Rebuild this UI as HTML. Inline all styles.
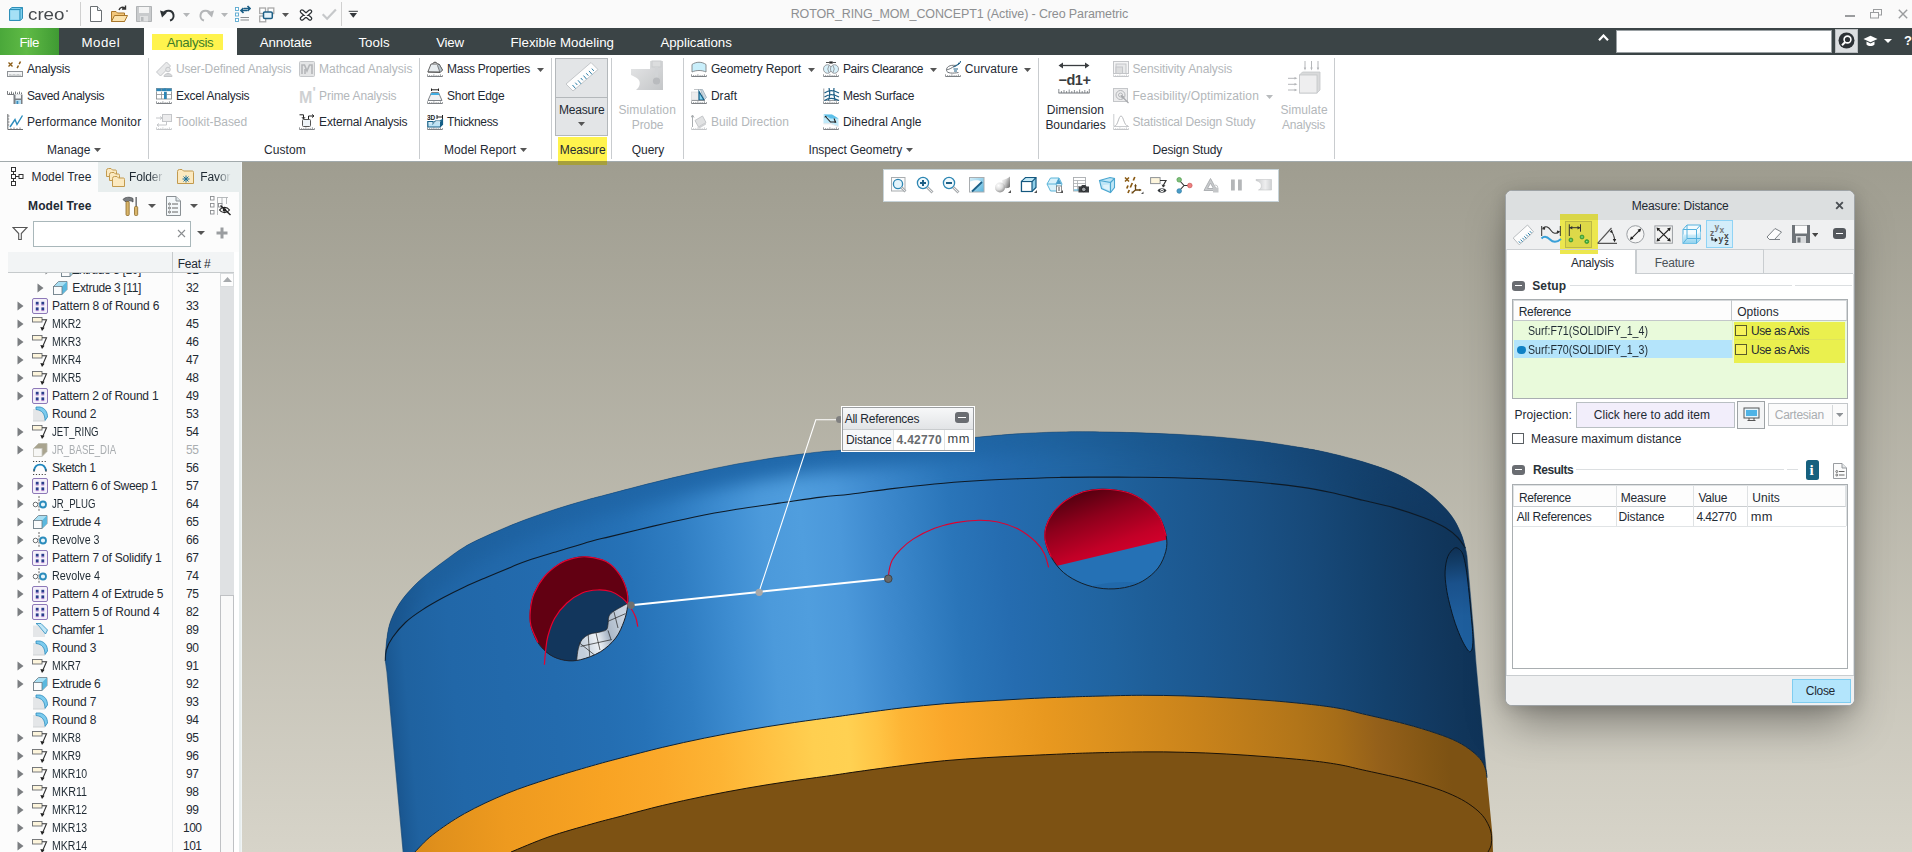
<!DOCTYPE html>
<html lang="en"><head><meta charset="utf-8"><title>ROTOR_RING_MOM_CONCEPT1 (Active) - Creo Parametric</title>
<style>
html,body{margin:0;padding:0;}
body{width:1912px;height:852px;overflow:hidden;background:#a29f94;font-family:"Liberation Sans",sans-serif;}
#app{position:relative;width:1912px;height:852px;overflow:hidden;}
#app div,#app svg,#app span{position:absolute;box-sizing:border-box;}
#app span.t{white-space:pre;}
</style></head><body><div id="app">
<svg style="left:0;top:0" width="1912" height="852" viewBox="0 0 1912 852"><defs><linearGradient id="bg" x1="0" y1="162" x2="0" y2="852" gradientUnits="userSpaceOnUse"><stop offset="0" stop-color="#9f9d90"/><stop offset="1" stop-color="#d7d4c9"/></linearGradient><linearGradient id="gb" x1="385" y1="640" x2="1493" y2="539.2" gradientUnits="userSpaceOnUse"><stop offset="0.0000" stop-color="#1a5791"/><stop offset="0.0063" stop-color="#1c5c98"/><stop offset="0.0152" stop-color="#1f62a0"/><stop offset="0.0582" stop-color="#2167a8"/><stop offset="0.1477" stop-color="#236bae"/><stop offset="0.1924" stop-color="#246eb2"/><stop offset="0.2247" stop-color="#2672b7"/><stop offset="0.2694" stop-color="#2f7dc2"/><stop offset="0.3142" stop-color="#3f8ed2"/><stop offset="0.3482" stop-color="#4c9adb"/><stop offset="0.3822" stop-color="#509ede"/><stop offset="0.4153" stop-color="#4b98da"/><stop offset="0.4493" stop-color="#3f8bcf"/><stop offset="0.4834" stop-color="#3480c4"/><stop offset="0.5165" stop-color="#2a75b9"/><stop offset="0.5612" stop-color="#256cb0"/><stop offset="0.6042" stop-color="#2268a8"/><stop offset="0.6516" stop-color="#20639f"/><stop offset="0.6848" stop-color="#1e5e98"/><stop offset="0.7295" stop-color="#1c5890"/><stop offset="0.7832" stop-color="#1a5185"/><stop offset="0.8369" stop-color="#174979"/><stop offset="0.8906" stop-color="#13406b"/><stop offset="0.9264" stop-color="#123a62"/><stop offset="0.9578" stop-color="#10355a"/><stop offset="0.9918" stop-color="#0f3257"/></linearGradient><linearGradient id="gband" x1="385" y1="500" x2="1493" y2="399.2" gradientUnits="userSpaceOnUse"><stop offset="0.0000" stop-color="#19558e"/><stop offset="0.0313" stop-color="#1d5f9c"/><stop offset="0.1924" stop-color="#1f65a6"/><stop offset="0.3357" stop-color="#2068aa"/><stop offset="0.4252" stop-color="#2169ab"/><stop offset="0.5147" stop-color="#2067a8"/><stop offset="0.6042" stop-color="#1e619d"/><stop offset="0.7116" stop-color="#1a568c"/><stop offset="0.8190" stop-color="#164878"/><stop offset="0.9085" stop-color="#123c66"/><stop offset="0.9918" stop-color="#10335a"/></linearGradient><linearGradient id="go" x1="385" y1="760" x2="1493" y2="659.2" gradientUnits="userSpaceOnUse"><stop offset="0.0170" stop-color="#d98a1a"/><stop offset="0.0403" stop-color="#e0901c"/><stop offset="0.1029" stop-color="#ee9a1f"/><stop offset="0.1924" stop-color="#f8a323"/><stop offset="0.2462" stop-color="#fba92a"/><stop offset="0.2999" stop-color="#fdb434"/><stop offset="0.3446" stop-color="#ffc243"/><stop offset="0.3849" stop-color="#ffcf50"/><stop offset="0.4162" stop-color="#ffd152"/><stop offset="0.4431" stop-color="#ffc444"/><stop offset="0.4655" stop-color="#fdb535"/><stop offset="0.5057" stop-color="#faa72a"/><stop offset="0.5505" stop-color="#f0a025"/><stop offset="0.5953" stop-color="#e8981f"/><stop offset="0.6400" stop-color="#de921e"/><stop offset="0.7295" stop-color="#c9831b"/><stop offset="0.8190" stop-color="#b27519"/><stop offset="0.8548" stop-color="#a66d18"/><stop offset="0.8906" stop-color="#94601a"/><stop offset="0.9354" stop-color="#835614"/><stop offset="0.9533" stop-color="#7d5213"/></linearGradient><linearGradient id="gr2" x1="1092" y1="489" x2="1118" y2="562" gradientUnits="userSpaceOnUse"><stop offset="0" stop-color="#560010"/><stop offset=".35" stop-color="#8e001c"/><stop offset=".75" stop-color="#c20027"/><stop offset="1" stop-color="#d6002c"/></linearGradient><linearGradient id="gm" x1="580" y1="640" x2="625" y2="625" gradientUnits="userSpaceOnUse"><stop offset="0" stop-color="#c3cedb"/><stop offset=".35" stop-color="#eef2f6"/><stop offset=".6" stop-color="#a9b6c6"/><stop offset="1" stop-color="#c9d3df"/></linearGradient><linearGradient id="gh3" x1="1452" y1="550" x2="1462" y2="645" gradientUnits="userSpaceOnUse"><stop offset="0" stop-color="#0f3257"/><stop offset=".12" stop-color="#123c66"/><stop offset=".35" stop-color="#1a518b"/><stop offset=".7" stop-color="#1e5d9b"/><stop offset="1" stop-color="#1e5f9e"/></linearGradient>
<clipPath id="ch1"><path d="M586.7 556.9 C592.3 557.5 600.9 558.7 606.5 561.8 C612.1 564.9 616.8 570.4 620.2 575.5 C623.6 580.6 625.9 587.2 627.1 592.3 C628.3 597.4 628.1 601.2 627.6 606.0 C627.1 610.8 626.0 616.0 624.0 621.3 C622.0 626.6 619.6 632.9 615.7 638.0 C611.8 643.1 606.2 648.2 600.4 651.8 C594.5 655.4 586.5 658.3 580.6 659.7 C574.8 661.1 570.4 661.2 565.3 660.4 C560.2 659.6 554.6 657.8 550.0 654.8 C545.4 651.8 541.1 647.4 537.9 642.6 C534.7 637.8 532.3 631.1 531.0 625.8 C529.7 620.5 529.8 615.9 530.3 610.6 C530.8 605.3 531.7 599.4 534.0 593.8 C536.3 588.2 539.8 582.0 544.0 577.0 C548.2 572.0 554.4 567.1 559.2 564.0 C564.0 560.9 568.4 559.6 573.0 558.4 C577.6 557.2 581.1 556.3 586.7 556.9 Z"/></clipPath>
<clipPath id="ch2"><path d="M1103.2 489.2 C1110.6 489.3 1120.5 490.3 1127.6 492.5 C1134.7 494.7 1140.6 498.3 1145.9 502.5 C1151.2 506.7 1156.3 512.1 1159.7 517.7 C1163.1 523.3 1165.2 530.4 1166.2 536.0 C1167.2 541.6 1167.2 546.0 1165.8 551.3 C1164.4 556.6 1161.9 563.0 1158.1 568.0 C1154.3 573.0 1148.5 577.7 1142.9 581.0 C1137.3 584.3 1131.2 586.3 1124.6 587.6 C1118.0 588.9 1110.3 589.3 1103.2 588.6 C1096.1 587.9 1088.5 586.0 1081.9 583.3 C1075.3 580.6 1068.7 576.9 1063.6 572.6 C1058.5 568.3 1054.5 562.7 1051.4 557.4 C1048.4 552.1 1046.2 545.7 1045.3 540.6 C1044.4 535.5 1044.7 531.5 1046.0 526.9 C1047.3 522.3 1049.7 517.4 1052.9 513.1 C1056.1 508.8 1059.9 504.6 1065.0 501.0 C1070.1 497.4 1077.0 493.8 1083.4 491.8 C1089.8 489.8 1095.8 489.1 1103.2 489.2 Z"/></clipPath>
<filter id="fb" x="-5%" y="-20%" width="110%" height="140%"><feGaussianBlur stdDeviation="9"/></filter>
<mask id="mband" maskUnits="userSpaceOnUse" x="380" y="400" width="1120" height="300"><path d="M385.3 660.0 C385.5 657.3 385.6 649.6 386.3 643.7 C387.0 637.8 387.7 630.6 389.5 624.6 C391.3 618.6 393.9 613.0 396.9 607.7 C399.9 602.4 403.3 597.9 407.5 593.0 C411.7 588.1 416.3 583.4 422.3 578.2 C428.3 573.0 436.4 566.9 443.4 561.7 C450.4 556.5 457.5 551.1 464.5 546.9 C471.5 542.7 476.8 540.3 485.6 536.3 C494.4 532.3 506.7 526.9 517.3 522.8 C527.9 518.6 537.9 515.1 549.0 511.4 C560.1 507.7 573.7 503.6 583.9 500.7 C594.1 497.8 598.6 496.8 610.0 493.8 C621.4 490.8 638.2 486.3 652.3 482.8 C666.4 479.3 680.4 475.9 694.5 472.8 C708.6 469.7 722.7 466.6 736.8 464.0 C750.9 461.4 764.9 459.2 779.0 457.1 C793.1 455.1 811.0 452.8 821.3 451.7 C831.5 450.6 831.5 451.1 840.5 450.3 C849.5 449.5 863.1 448.0 875.0 446.8 C886.9 445.6 900.3 444.3 912.0 443.2 C923.7 442.1 934.5 441.0 945.0 440.0 C955.5 439.0 962.7 438.4 975.0 437.4 C987.3 436.3 1004.6 434.6 1019.0 433.7 C1033.4 432.8 1049.5 432.2 1061.3 431.9 C1073.1 431.6 1078.2 431.6 1090.0 431.7 C1101.8 431.8 1118.2 432.2 1132.3 432.6 C1146.4 433.0 1160.4 433.5 1174.5 434.2 C1188.6 434.9 1202.7 435.7 1216.8 436.9 C1230.9 438.1 1244.9 439.4 1259.0 441.2 C1273.1 443.0 1289.3 445.6 1301.3 447.6 C1313.3 449.6 1320.7 451.0 1331.0 453.4 C1341.3 455.8 1352.6 458.6 1363.0 461.8 C1373.4 465.0 1384.4 468.5 1393.6 472.5 C1402.8 476.5 1410.9 481.1 1418.0 485.6 C1425.1 490.1 1430.8 494.3 1436.4 499.4 C1442.0 504.5 1447.5 510.4 1451.6 516.0 C1455.7 521.6 1458.5 527.7 1460.8 533.0 C1463.1 538.3 1464.4 544.2 1465.4 548.0 C1466.4 551.8 1466.7 554.5 1467.0 555.8" fill="none" stroke="#fff" stroke-width="40" filter="url(#fb)"/></mask>
<clipPath id="cvp"><rect x="242" y="162" width="1670" height="690"/></clipPath>
</defs>
<g clip-path="url(#cvp)">
<rect x="242" y="162" width="1670" height="690" fill="url(#bg)"/>
<path d="M511.0 852.0 C517.3 849.5 535.6 841.4 549.0 836.8 C562.4 832.1 579.5 827.5 591.3 824.1 C603.1 820.7 608.2 819.6 620.0 816.5 C631.8 813.4 648.2 808.9 662.3 805.5 C676.4 802.1 690.4 799.1 704.5 796.2 C718.6 793.3 732.7 790.7 746.8 788.2 C760.9 785.7 774.9 783.5 789.0 781.4 C803.1 779.3 819.5 777.2 831.3 775.5 C843.1 773.8 848.2 772.9 860.0 771.3 C871.8 769.6 888.2 767.4 902.3 765.6 C916.4 763.8 930.4 762.0 944.5 760.7 C958.6 759.4 972.7 758.5 986.8 757.6 C1000.9 756.7 1014.9 756.2 1029.0 755.5 C1043.1 754.8 1059.5 754.1 1071.3 753.6 C1083.1 753.1 1088.2 753.0 1100.0 752.7 C1111.8 752.4 1128.2 752.0 1142.3 751.9 C1156.4 751.8 1170.4 751.9 1184.5 752.3 C1198.6 752.6 1212.7 753.2 1226.8 754.0 C1240.9 754.8 1254.9 755.8 1269.0 756.9 C1283.1 758.0 1299.5 759.4 1311.3 760.7 C1323.1 762.0 1331.5 763.3 1340.0 764.8 C1348.5 766.3 1351.5 767.4 1362.3 769.8 C1373.0 772.2 1392.2 776.2 1404.5 779.3 C1416.8 782.4 1427.4 785.6 1436.2 788.6 C1445.0 791.6 1451.3 794.4 1457.3 797.3 C1463.3 800.2 1467.9 803.1 1472.1 806.2 C1476.3 809.3 1479.9 812.4 1482.7 815.7 C1485.5 819.0 1487.5 822.9 1489.0 826.2 C1490.5 829.5 1491.2 832.5 1491.6 835.7 C1491.9 838.9 1491.7 842.5 1491.1 845.2 C1490.5 847.9 1488.5 850.9 1488.0 852.0 Z" fill="#7d5213"/>
<path d="M414.9 852.0 C417.9 849.1 424.5 841.1 432.8 834.7 C441.1 828.3 452.2 820.5 464.5 813.6 C476.8 806.7 492.7 799.3 506.8 793.5 C520.9 787.7 534.9 783.3 549.0 778.7 C563.1 774.1 579.5 769.4 591.3 766.0 C603.1 762.6 608.2 761.3 620.0 758.2 C631.8 755.1 648.2 750.8 662.3 747.4 C676.4 744.0 690.4 741.0 704.5 738.1 C718.6 735.2 732.7 732.6 746.8 730.1 C760.9 727.6 774.9 725.4 789.0 723.3 C803.1 721.2 819.5 719.0 831.3 717.4 C843.1 715.8 848.2 715.0 860.0 713.4 C871.8 711.8 888.2 709.5 902.3 707.9 C916.4 706.3 930.4 704.9 944.5 703.7 C958.6 702.6 972.7 701.9 986.8 701.0 C1000.9 700.1 1014.9 699.3 1029.0 698.6 C1043.1 697.9 1059.5 697.3 1071.3 696.9 C1083.1 696.5 1088.2 696.4 1100.0 696.1 C1111.8 695.8 1128.2 695.3 1142.3 695.3 C1156.4 695.3 1170.4 695.5 1184.5 695.9 C1198.6 696.3 1212.7 697.0 1226.8 697.8 C1240.9 698.6 1254.9 699.4 1269.0 700.5 C1283.1 701.6 1299.5 703.2 1311.3 704.5 C1323.1 705.8 1331.5 707.0 1340.0 708.5 C1348.5 710.0 1351.5 711.2 1362.3 713.8 C1373.0 716.3 1392.2 720.5 1404.5 723.8 C1416.8 727.0 1427.4 730.3 1436.2 733.3 C1445.0 736.3 1451.3 738.7 1457.3 741.7 C1463.3 744.7 1468.0 748.0 1472.1 751.2 C1476.1 754.4 1479.3 757.5 1481.6 760.7 C1483.9 763.9 1485.0 767.4 1485.9 770.2 C1486.8 773.0 1486.7 776.4 1486.9 777.6 L1492.2 832.6 L1493 852 L511 852 Z" fill="url(#go)"/>
<path d="M511.0 852.0 C517.3 849.5 535.6 841.4 549.0 836.8 C562.4 832.1 579.5 827.5 591.3 824.1 C603.1 820.7 608.2 819.6 620.0 816.5 C631.8 813.4 648.2 808.9 662.3 805.5 C676.4 802.1 690.4 799.1 704.5 796.2 C718.6 793.3 732.7 790.7 746.8 788.2 C760.9 785.7 774.9 783.5 789.0 781.4 C803.1 779.3 819.5 777.2 831.3 775.5 C843.1 773.8 848.2 772.9 860.0 771.3 C871.8 769.6 888.2 767.4 902.3 765.6 C916.4 763.8 930.4 762.0 944.5 760.7 C958.6 759.4 972.7 758.5 986.8 757.6 C1000.9 756.7 1014.9 756.2 1029.0 755.5 C1043.1 754.8 1059.5 754.1 1071.3 753.6 C1083.1 753.1 1088.2 753.0 1100.0 752.7 C1111.8 752.4 1128.2 752.0 1142.3 751.9 C1156.4 751.8 1170.4 751.9 1184.5 752.3 C1198.6 752.6 1212.7 753.2 1226.8 754.0 C1240.9 754.8 1254.9 755.8 1269.0 756.9 C1283.1 758.0 1299.5 759.4 1311.3 760.7 C1323.1 762.0 1331.5 763.3 1340.0 764.8 C1348.5 766.3 1351.5 767.4 1362.3 769.8 C1373.0 772.2 1392.2 776.2 1404.5 779.3 C1416.8 782.4 1427.4 785.6 1436.2 788.6 C1445.0 791.6 1451.3 794.4 1457.3 797.3 C1463.3 800.2 1467.9 803.1 1472.1 806.2 C1476.3 809.3 1479.9 812.4 1482.7 815.7 C1485.5 819.0 1487.5 822.9 1489.0 826.2 C1490.5 829.5 1491.2 832.5 1491.6 835.7 C1491.9 838.9 1491.7 842.5 1491.1 845.2 C1490.5 847.9 1488.5 850.9 1488.0 852.0 Z" fill="#7d5213"/>
<path d="M511.0 852.0 C517.3 849.5 535.6 841.4 549.0 836.8 C562.4 832.1 579.5 827.5 591.3 824.1 C603.1 820.7 608.2 819.6 620.0 816.5 C631.8 813.4 648.2 808.9 662.3 805.5 C676.4 802.1 690.4 799.1 704.5 796.2 C718.6 793.3 732.7 790.7 746.8 788.2 C760.9 785.7 774.9 783.5 789.0 781.4 C803.1 779.3 819.5 777.2 831.3 775.5 C843.1 773.8 848.2 772.9 860.0 771.3 C871.8 769.6 888.2 767.4 902.3 765.6 C916.4 763.8 930.4 762.0 944.5 760.7 C958.6 759.4 972.7 758.5 986.8 757.6 C1000.9 756.7 1014.9 756.2 1029.0 755.5 C1043.1 754.8 1059.5 754.1 1071.3 753.6 C1083.1 753.1 1088.2 753.0 1100.0 752.7 C1111.8 752.4 1128.2 752.0 1142.3 751.9 C1156.4 751.8 1170.4 751.9 1184.5 752.3 C1198.6 752.6 1212.7 753.2 1226.8 754.0 C1240.9 754.8 1254.9 755.8 1269.0 756.9 C1283.1 758.0 1299.5 759.4 1311.3 760.7 C1323.1 762.0 1331.5 763.3 1340.0 764.8 C1348.5 766.3 1351.5 767.4 1362.3 769.8 C1373.0 772.2 1392.2 776.2 1404.5 779.3 C1416.8 782.4 1427.4 785.6 1436.2 788.6 C1445.0 791.6 1451.3 794.4 1457.3 797.3 C1463.3 800.2 1467.9 803.1 1472.1 806.2 C1476.3 809.3 1479.9 812.4 1482.7 815.7 C1485.5 819.0 1487.5 822.9 1489.0 826.2 C1490.5 829.5 1491.2 832.5 1491.6 835.7 C1491.9 838.9 1491.7 842.5 1491.1 845.2 C1490.5 847.9 1488.5 850.9 1488.0 852.0" fill="none" stroke="#1a1208" stroke-width="1"/>
<path d="M385.3 660.0 C385.5 657.3 385.6 649.6 386.3 643.7 C387.0 637.8 387.7 630.6 389.5 624.6 C391.3 618.6 393.9 613.0 396.9 607.7 C399.9 602.4 403.3 597.9 407.5 593.0 C411.7 588.1 416.3 583.4 422.3 578.2 C428.3 573.0 436.4 566.9 443.4 561.7 C450.4 556.5 457.5 551.1 464.5 546.9 C471.5 542.7 476.8 540.3 485.6 536.3 C494.4 532.3 506.7 526.9 517.3 522.8 C527.9 518.6 537.9 515.1 549.0 511.4 C560.1 507.7 573.7 503.6 583.9 500.7 C594.1 497.8 598.6 496.8 610.0 493.8 C621.4 490.8 638.2 486.3 652.3 482.8 C666.4 479.3 680.4 475.9 694.5 472.8 C708.6 469.7 722.7 466.6 736.8 464.0 C750.9 461.4 764.9 459.2 779.0 457.1 C793.1 455.1 811.0 452.8 821.3 451.7 C831.5 450.6 831.5 451.1 840.5 450.3 C849.5 449.5 863.1 448.0 875.0 446.8 C886.9 445.6 900.3 444.3 912.0 443.2 C923.7 442.1 934.5 441.0 945.0 440.0 C955.5 439.0 962.7 438.4 975.0 437.4 C987.3 436.3 1004.6 434.6 1019.0 433.7 C1033.4 432.8 1049.5 432.2 1061.3 431.9 C1073.1 431.6 1078.2 431.6 1090.0 431.7 C1101.8 431.8 1118.2 432.2 1132.3 432.6 C1146.4 433.0 1160.4 433.5 1174.5 434.2 C1188.6 434.9 1202.7 435.7 1216.8 436.9 C1230.9 438.1 1244.9 439.4 1259.0 441.2 C1273.1 443.0 1289.3 445.6 1301.3 447.6 C1313.3 449.6 1320.7 451.0 1331.0 453.4 C1341.3 455.8 1352.6 458.6 1363.0 461.8 C1373.4 465.0 1384.4 468.5 1393.6 472.5 C1402.8 476.5 1410.9 481.1 1418.0 485.6 C1425.1 490.1 1430.8 494.3 1436.4 499.4 C1442.0 504.5 1447.5 510.4 1451.6 516.0 C1455.7 521.6 1458.5 527.7 1460.8 533.0 C1463.1 538.3 1464.4 544.2 1465.4 548.0 C1466.4 551.8 1466.7 554.5 1467.0 555.8C1468.0 567.2 1471.4 604.6 1473.0 624.0 C1474.6 643.4 1475.3 655.3 1476.8 672.0 C1478.3 688.7 1480.1 706.4 1481.8 724.0 C1483.5 741.6 1486.1 768.7 1486.9 777.6C1486.7 776.4 1486.8 773.0 1485.9 770.2 C1485.0 767.4 1483.9 763.9 1481.6 760.7 C1479.3 757.5 1476.1 754.4 1472.1 751.2 C1468.0 748.0 1463.3 744.7 1457.3 741.7 C1451.3 738.7 1445.0 736.3 1436.2 733.3 C1427.4 730.3 1416.8 727.0 1404.5 723.8 C1392.2 720.5 1373.0 716.3 1362.3 713.8 C1351.5 711.2 1348.5 710.0 1340.0 708.5 C1331.5 707.0 1323.1 705.8 1311.3 704.5 C1299.5 703.2 1283.1 701.6 1269.0 700.5 C1254.9 699.4 1240.9 698.6 1226.8 697.8 C1212.7 697.0 1198.6 696.3 1184.5 695.9 C1170.4 695.5 1156.4 695.3 1142.3 695.3 C1128.2 695.3 1111.8 695.8 1100.0 696.1 C1088.2 696.4 1083.1 696.5 1071.3 696.9 C1059.5 697.3 1043.1 697.9 1029.0 698.6 C1014.9 699.3 1000.9 700.1 986.8 701.0 C972.7 701.9 958.6 702.6 944.5 703.7 C930.4 704.9 916.4 706.3 902.3 707.9 C888.2 709.5 871.8 711.8 860.0 713.4 C848.2 715.0 843.1 715.8 831.3 717.4 C819.5 719.0 803.1 721.2 789.0 723.3 C774.9 725.4 760.9 727.6 746.8 730.1 C732.7 732.6 718.6 735.2 704.5 738.1 C690.4 741.0 676.4 744.0 662.3 747.4 C648.2 750.8 631.8 755.1 620.0 758.2 C608.2 761.3 603.1 762.6 591.3 766.0 C579.5 769.4 563.1 774.1 549.0 778.7 C534.9 783.3 520.9 787.7 506.8 793.5 C492.7 799.3 476.8 806.7 464.5 813.6 C452.2 820.5 441.1 828.3 432.8 834.7 C424.5 841.1 417.9 849.1 414.9 852.0 L403.2 852 L387 672 Z" fill="url(#gb)"/>
<path d="M385.3 660.0 C385.5 657.3 385.6 649.6 386.3 643.7 C387.0 637.8 387.7 630.6 389.5 624.6 C391.3 618.6 393.9 613.0 396.9 607.7 C399.9 602.4 403.3 597.9 407.5 593.0 C411.7 588.1 416.3 583.4 422.3 578.2 C428.3 573.0 436.4 566.9 443.4 561.7 C450.4 556.5 457.5 551.1 464.5 546.9 C471.5 542.7 476.8 540.3 485.6 536.3 C494.4 532.3 506.7 526.9 517.3 522.8 C527.9 518.6 537.9 515.1 549.0 511.4 C560.1 507.7 573.7 503.6 583.9 500.7 C594.1 497.8 598.6 496.8 610.0 493.8 C621.4 490.8 638.2 486.3 652.3 482.8 C666.4 479.3 680.4 475.9 694.5 472.8 C708.6 469.7 722.7 466.6 736.8 464.0 C750.9 461.4 764.9 459.2 779.0 457.1 C793.1 455.1 811.0 452.8 821.3 451.7 C831.5 450.6 831.5 451.1 840.5 450.3 C849.5 449.5 863.1 448.0 875.0 446.8 C886.9 445.6 900.3 444.3 912.0 443.2 C923.7 442.1 934.5 441.0 945.0 440.0 C955.5 439.0 962.7 438.4 975.0 437.4 C987.3 436.3 1004.6 434.6 1019.0 433.7 C1033.4 432.8 1049.5 432.2 1061.3 431.9 C1073.1 431.6 1078.2 431.6 1090.0 431.7 C1101.8 431.8 1118.2 432.2 1132.3 432.6 C1146.4 433.0 1160.4 433.5 1174.5 434.2 C1188.6 434.9 1202.7 435.7 1216.8 436.9 C1230.9 438.1 1244.9 439.4 1259.0 441.2 C1273.1 443.0 1289.3 445.6 1301.3 447.6 C1313.3 449.6 1320.7 451.0 1331.0 453.4 C1341.3 455.8 1352.6 458.6 1363.0 461.8 C1373.4 465.0 1384.4 468.5 1393.6 472.5 C1402.8 476.5 1410.9 481.1 1418.0 485.6 C1425.1 490.1 1430.8 494.3 1436.4 499.4 C1442.0 504.5 1447.5 510.4 1451.6 516.0 C1455.7 521.6 1458.5 527.7 1460.8 533.0 C1463.1 538.3 1464.4 544.2 1465.4 548.0 C1466.4 551.8 1466.7 554.5 1467.0 555.8 L1465.4 548.2C1464.1 546.4 1461.0 540.9 1457.7 537.5 C1454.4 534.1 1451.1 531.0 1445.5 527.7 C1439.9 524.4 1432.7 521.1 1424.0 517.7 C1415.3 514.4 1403.8 510.5 1393.6 507.6 C1383.4 504.7 1373.4 502.8 1363.0 500.3 C1352.6 497.8 1341.3 494.7 1331.0 492.5 C1320.7 490.3 1313.3 488.8 1301.3 487.1 C1289.3 485.4 1273.1 483.6 1259.0 482.3 C1244.9 481.0 1230.9 480.1 1216.8 479.3 C1202.7 478.5 1188.6 478.1 1174.5 477.7 C1160.4 477.3 1146.4 477.3 1132.3 477.2 C1118.2 477.1 1101.8 477.1 1090.0 477.1 C1078.2 477.1 1073.1 477.1 1061.3 477.4 C1049.5 477.7 1033.1 478.1 1019.0 478.7 C1004.9 479.3 990.9 479.9 976.8 480.8 C962.7 481.7 948.6 482.7 934.5 484.0 C920.4 485.3 906.4 486.9 892.3 488.6 C878.2 490.3 861.8 492.8 850.0 494.2 C838.2 495.6 833.1 495.6 821.3 497.1 C809.5 498.6 793.1 501.1 779.0 503.1 C764.9 505.1 750.9 507.0 736.8 509.3 C722.7 511.6 708.6 514.1 694.5 517.0 C680.4 519.9 666.4 523.1 652.3 526.4 C638.2 529.7 620.2 534.1 610.0 536.6 C599.8 539.1 599.7 538.9 591.3 541.2 C582.9 543.6 570.2 547.5 559.6 550.7 C549.0 553.9 536.0 557.6 527.9 560.4 C519.8 563.1 518.0 564.3 511.0 567.2 C503.9 570.1 493.4 574.4 485.6 577.7 C477.9 581.0 471.5 583.7 464.5 587.0 C457.5 590.3 450.4 593.8 443.4 597.6 C436.4 601.4 428.6 605.8 422.3 609.9 C416.0 614.0 410.3 617.9 405.4 622.5 C400.5 627.1 395.9 632.7 392.7 637.3 C389.5 641.9 387.5 646.0 386.3 650.0 C385.1 654.0 385.5 659.2 385.4 661.0 Z" fill="url(#gband)" mask="url(#mband)"/>
<path d="M385.4 661.0 C385.5 659.2 385.1 654.0 386.3 650.0 C387.5 646.0 389.5 641.9 392.7 637.3 C395.9 632.7 400.5 627.1 405.4 622.5 C410.3 617.9 416.0 614.0 422.3 609.9 C428.6 605.8 436.4 601.4 443.4 597.6 C450.4 593.8 457.5 590.3 464.5 587.0 C471.5 583.7 477.9 581.0 485.6 577.7 C493.4 574.4 503.9 570.1 511.0 567.2 C518.0 564.3 519.8 563.1 527.9 560.4 C536.0 557.6 549.0 553.9 559.6 550.7 C570.2 547.5 582.9 543.6 591.3 541.2 C599.7 538.9 599.8 539.1 610.0 536.6 C620.2 534.1 638.2 529.7 652.3 526.4 C666.4 523.1 680.4 519.9 694.5 517.0 C708.6 514.1 722.7 511.6 736.8 509.3 C750.9 507.0 764.9 505.1 779.0 503.1 C793.1 501.1 809.5 498.6 821.3 497.1 C833.1 495.6 838.2 495.6 850.0 494.2 C861.8 492.8 878.2 490.3 892.3 488.6 C906.4 486.9 920.4 485.3 934.5 484.0 C948.6 482.7 962.7 481.7 976.8 480.8 C990.9 479.9 1004.9 479.3 1019.0 478.7 C1033.1 478.1 1049.5 477.7 1061.3 477.4 C1073.1 477.1 1078.2 477.1 1090.0 477.1 C1101.8 477.1 1118.2 477.1 1132.3 477.2 C1146.4 477.3 1160.4 477.3 1174.5 477.7 C1188.6 478.1 1202.7 478.5 1216.8 479.3 C1230.9 480.1 1244.9 481.0 1259.0 482.3 C1273.1 483.6 1289.3 485.4 1301.3 487.1 C1313.3 488.8 1320.7 490.3 1331.0 492.5 C1341.3 494.7 1352.6 497.8 1363.0 500.3 C1373.4 502.8 1383.4 504.7 1393.6 507.6 C1403.8 510.5 1415.3 514.4 1424.0 517.7 C1432.7 521.1 1439.9 524.4 1445.5 527.7 C1451.1 531.0 1454.4 534.1 1457.7 537.5 C1461.0 540.9 1464.1 546.4 1465.4 548.2" fill="none" stroke="#0e1a26" stroke-width="1.1"/>
<path d="M414.9 852.0 C417.9 849.1 424.5 841.1 432.8 834.7 C441.1 828.3 452.2 820.5 464.5 813.6 C476.8 806.7 492.7 799.3 506.8 793.5 C520.9 787.7 534.9 783.3 549.0 778.7 C563.1 774.1 579.5 769.4 591.3 766.0 C603.1 762.6 608.2 761.3 620.0 758.2 C631.8 755.1 648.2 750.8 662.3 747.4 C676.4 744.0 690.4 741.0 704.5 738.1 C718.6 735.2 732.7 732.6 746.8 730.1 C760.9 727.6 774.9 725.4 789.0 723.3 C803.1 721.2 819.5 719.0 831.3 717.4 C843.1 715.8 848.2 715.0 860.0 713.4 C871.8 711.8 888.2 709.5 902.3 707.9 C916.4 706.3 930.4 704.9 944.5 703.7 C958.6 702.6 972.7 701.9 986.8 701.0 C1000.9 700.1 1014.9 699.3 1029.0 698.6 C1043.1 697.9 1059.5 697.3 1071.3 696.9 C1083.1 696.5 1088.2 696.4 1100.0 696.1 C1111.8 695.8 1128.2 695.3 1142.3 695.3 C1156.4 695.3 1170.4 695.5 1184.5 695.9 C1198.6 696.3 1212.7 697.0 1226.8 697.8 C1240.9 698.6 1254.9 699.4 1269.0 700.5 C1283.1 701.6 1299.5 703.2 1311.3 704.5 C1323.1 705.8 1331.5 707.0 1340.0 708.5 C1348.5 710.0 1351.5 711.2 1362.3 713.8 C1373.0 716.3 1392.2 720.5 1404.5 723.8 C1416.8 727.0 1427.4 730.3 1436.2 733.3 C1445.0 736.3 1451.3 738.7 1457.3 741.7 C1463.3 744.7 1468.0 748.0 1472.1 751.2 C1476.1 754.4 1479.3 757.5 1481.6 760.7 C1483.9 763.9 1485.0 767.4 1485.9 770.2 C1486.8 773.0 1486.7 776.4 1486.9 777.6" fill="none" stroke="#0f2233" stroke-width="1"/>
<path d="M385.3 660.0 C385.5 657.3 385.6 649.6 386.3 643.7 C387.0 637.8 387.7 630.6 389.5 624.6 C391.3 618.6 393.9 613.0 396.9 607.7 C399.9 602.4 403.3 597.9 407.5 593.0 C411.7 588.1 416.3 583.4 422.3 578.2 C428.3 573.0 436.4 566.9 443.4 561.7 C450.4 556.5 457.5 551.1 464.5 546.9 C471.5 542.7 476.8 540.3 485.6 536.3 C494.4 532.3 506.7 526.9 517.3 522.8 C527.9 518.6 537.9 515.1 549.0 511.4 C560.1 507.7 573.7 503.6 583.9 500.7 C594.1 497.8 598.6 496.8 610.0 493.8 C621.4 490.8 638.2 486.3 652.3 482.8 C666.4 479.3 680.4 475.9 694.5 472.8 C708.6 469.7 722.7 466.6 736.8 464.0 C750.9 461.4 764.9 459.2 779.0 457.1 C793.1 455.1 811.0 452.8 821.3 451.7 C831.5 450.6 831.5 451.1 840.5 450.3 C849.5 449.5 863.1 448.0 875.0 446.8 C886.9 445.6 900.3 444.3 912.0 443.2 C923.7 442.1 934.5 441.0 945.0 440.0 C955.5 439.0 962.7 438.4 975.0 437.4 C987.3 436.3 1004.6 434.6 1019.0 433.7 C1033.4 432.8 1049.5 432.2 1061.3 431.9 C1073.1 431.6 1078.2 431.6 1090.0 431.7 C1101.8 431.8 1118.2 432.2 1132.3 432.6 C1146.4 433.0 1160.4 433.5 1174.5 434.2 C1188.6 434.9 1202.7 435.7 1216.8 436.9 C1230.9 438.1 1244.9 439.4 1259.0 441.2 C1273.1 443.0 1289.3 445.6 1301.3 447.6 C1313.3 449.6 1320.7 451.0 1331.0 453.4 C1341.3 455.8 1352.6 458.6 1363.0 461.8 C1373.4 465.0 1384.4 468.5 1393.6 472.5 C1402.8 476.5 1410.9 481.1 1418.0 485.6 C1425.1 490.1 1430.8 494.3 1436.4 499.4 C1442.0 504.5 1447.5 510.4 1451.6 516.0 C1455.7 521.6 1458.5 527.7 1460.8 533.0 C1463.1 538.3 1464.4 544.2 1465.4 548.0 C1466.4 551.8 1466.7 554.5 1467.0 555.8C1468.0 567.2 1471.4 604.6 1473.0 624.0 C1474.6 643.4 1475.3 655.3 1476.8 672.0 C1478.3 688.7 1480.1 706.4 1481.8 724.0 C1483.5 741.6 1486.1 768.7 1486.9 777.6" fill="none" stroke="#123a60" stroke-width="1" opacity=".45"/>
<path d="M385.3 660 L387 672 L403.2 852" fill="none" stroke="#174a7a" stroke-width="1.2" opacity=".7"/>
<!-- hole 1 -->
<path d="M586.7 556.9 C592.3 557.5 600.9 558.7 606.5 561.8 C612.1 564.9 616.8 570.4 620.2 575.5 C623.6 580.6 625.9 587.2 627.1 592.3 C628.3 597.4 628.1 601.2 627.6 606.0 C627.1 610.8 626.0 616.0 624.0 621.3 C622.0 626.6 619.6 632.9 615.7 638.0 C611.8 643.1 606.2 648.2 600.4 651.8 C594.5 655.4 586.5 658.3 580.6 659.7 C574.8 661.1 570.4 661.2 565.3 660.4 C560.2 659.6 554.6 657.8 550.0 654.8 C545.4 651.8 541.1 647.4 537.9 642.6 C534.7 637.8 532.3 631.1 531.0 625.8 C529.7 620.5 529.8 615.9 530.3 610.6 C530.8 605.3 531.7 599.4 534.0 593.8 C536.3 588.2 539.8 582.0 544.0 577.0 C548.2 572.0 554.4 567.1 559.2 564.0 C564.0 560.9 568.4 559.6 573.0 558.4 C577.6 557.2 581.1 556.3 586.7 556.9 Z" fill="#620012"/>
<g clip-path="url(#ch1)"><path d="M544.4 664.7 C544.6 662.6 544.9 656.5 545.5 651.8 C546.1 647.1 546.3 642.1 547.8 636.5 C549.3 630.9 551.5 623.8 554.7 618.2 C557.9 612.6 562.3 607.2 566.9 603.0 C571.5 598.8 577.0 595.2 582.1 593.0 C587.2 590.8 592.6 590.2 597.4 590.0 C602.2 589.8 606.9 590.2 611.0 591.5 C615.1 592.8 618.7 595.2 621.8 597.6 C624.9 600.0 627.1 602.8 629.4 606.0 C631.7 609.2 634.1 613.3 635.5 616.7 C636.9 620.1 637.4 625.0 637.8 626.6 L660 700 L520 700 Z" fill="#12365c"/><path d="M576.8 659.4 C577.0 657.6 577.4 652.0 578.3 648.7 C579.2 645.4 580.2 642.0 582.1 639.6 C584.0 637.2 586.7 635.5 589.7 634.2 C592.8 632.9 597.6 632.7 600.4 631.9 C603.2 631.1 605.2 630.9 606.5 629.6 C607.8 628.3 607.6 626.4 608.0 624.3 C608.4 622.1 608.0 618.7 608.8 616.7 C609.6 614.7 610.7 613.6 612.6 612.1 C614.5 610.6 617.8 608.9 620.2 607.5 C622.6 606.1 626.0 604.3 627.1 603.7 L640 604 L640 670 L576 670 Z" fill="url(#gm)" stroke="#222" stroke-width=".7"/>
<path d="M608 621.3 L625.6 613.6 M580.6 646.4 L611.8 639.6 M588.2 635 L589.7 656.3 M579 642.6 L594.3 654.8 M608 630.4 L611 639.6 M596 633 L600 650 M614 612 L618 628" fill="none" stroke="#222" stroke-width=".7"/></g>
<path d="M586.7 556.9 C592.3 557.5 600.9 558.7 606.5 561.8 C612.1 564.9 616.8 570.4 620.2 575.5 C623.6 580.6 625.9 587.2 627.1 592.3 C628.3 597.4 628.1 601.2 627.6 606.0 C627.1 610.8 626.0 616.0 624.0 621.3 C622.0 626.6 619.6 632.9 615.7 638.0 C611.8 643.1 606.2 648.2 600.4 651.8 C594.5 655.4 586.5 658.3 580.6 659.7 C574.8 661.1 570.4 661.2 565.3 660.4 C560.2 659.6 554.6 657.8 550.0 654.8 C545.4 651.8 541.1 647.4 537.9 642.6 C534.7 637.8 532.3 631.1 531.0 625.8 C529.7 620.5 529.8 615.9 530.3 610.6 C530.8 605.3 531.7 599.4 534.0 593.8 C536.3 588.2 539.8 582.0 544.0 577.0 C548.2 572.0 554.4 567.1 559.2 564.0 C564.0 560.9 568.4 559.6 573.0 558.4 C577.6 557.2 581.1 556.3 586.7 556.9 Z" fill="none" stroke="#1a2430" stroke-width="1"/>
<path d="M537.9 642.6 C536.8 639.8 532.3 631.1 531.0 625.8 C529.7 620.5 529.8 615.9 530.3 610.6 C530.8 605.3 531.7 599.4 534.0 593.8 C536.3 588.2 539.8 582.0 544.0 577.0 C548.2 572.0 554.4 567.1 559.2 564.0 C564.0 560.9 568.4 559.6 573.0 558.4 C577.6 557.2 581.1 556.3 586.7 556.9 C592.3 557.5 600.9 558.7 606.5 561.8 C612.1 564.9 616.8 570.4 620.2 575.5 C623.6 580.6 625.9 587.2 627.1 592.3 C628.3 597.4 627.5 603.7 627.6 606.0" fill="none" stroke="#e8002f" stroke-width="1.2"/>
<path d="M544.4 664.7 C544.6 662.6 544.9 656.5 545.5 651.8 C546.1 647.1 546.3 642.1 547.8 636.5 C549.3 630.9 551.5 623.8 554.7 618.2 C557.9 612.6 562.3 607.2 566.9 603.0 C571.5 598.8 577.0 595.2 582.1 593.0 C587.2 590.8 592.6 590.2 597.4 590.0 C602.2 589.8 606.9 590.2 611.0 591.5 C615.1 592.8 618.7 595.2 621.8 597.6 C624.9 600.0 627.1 602.8 629.4 606.0 C631.7 609.2 634.1 613.3 635.5 616.7 C636.9 620.1 637.4 625.0 637.8 626.6" fill="none" stroke="#e8002f" stroke-width="1.2"/>
<!-- hole 2 -->
<path d="M1103.2 489.2 C1110.6 489.3 1120.5 490.3 1127.6 492.5 C1134.7 494.7 1140.6 498.3 1145.9 502.5 C1151.2 506.7 1156.3 512.1 1159.7 517.7 C1163.1 523.3 1165.2 530.4 1166.2 536.0 C1167.2 541.6 1167.2 546.0 1165.8 551.3 C1164.4 556.6 1161.9 563.0 1158.1 568.0 C1154.3 573.0 1148.5 577.7 1142.9 581.0 C1137.3 584.3 1131.2 586.3 1124.6 587.6 C1118.0 588.9 1110.3 589.3 1103.2 588.6 C1096.1 587.9 1088.5 586.0 1081.9 583.3 C1075.3 580.6 1068.7 576.9 1063.6 572.6 C1058.5 568.3 1054.5 562.7 1051.4 557.4 C1048.4 552.1 1046.2 545.7 1045.3 540.6 C1044.4 535.5 1044.7 531.5 1046.0 526.9 C1047.3 522.3 1049.7 517.4 1052.9 513.1 C1056.1 508.8 1059.9 504.6 1065.0 501.0 C1070.1 497.4 1077.0 493.8 1083.4 491.8 C1089.8 489.8 1095.8 489.1 1103.2 489.2 Z" fill="#2571b5"/>
<g clip-path="url(#ch2)"><path d="M1030 572.4 L1200 531.7 L1200 480 L1030 480 Z" fill="url(#gr2)"/><ellipse cx="1125" cy="592" rx="40" ry="10" fill="#1a5c99" opacity=".35"/></g>
<path d="M1103.2 489.2 C1110.6 489.3 1120.5 490.3 1127.6 492.5 C1134.7 494.7 1140.6 498.3 1145.9 502.5 C1151.2 506.7 1156.3 512.1 1159.7 517.7 C1163.1 523.3 1165.2 530.4 1166.2 536.0 C1167.2 541.6 1167.2 546.0 1165.8 551.3 C1164.4 556.6 1161.9 563.0 1158.1 568.0 C1154.3 573.0 1148.5 577.7 1142.9 581.0 C1137.3 584.3 1131.2 586.3 1124.6 587.6 C1118.0 588.9 1110.3 589.3 1103.2 588.6 C1096.1 587.9 1088.5 586.0 1081.9 583.3 C1075.3 580.6 1068.7 576.9 1063.6 572.6 C1058.5 568.3 1054.5 562.7 1051.4 557.4 C1048.4 552.1 1046.2 545.7 1045.3 540.6 C1044.4 535.5 1044.7 531.5 1046.0 526.9 C1047.3 522.3 1049.7 517.4 1052.9 513.1 C1056.1 508.8 1059.9 504.6 1065.0 501.0 C1070.1 497.4 1077.0 493.8 1083.4 491.8 C1089.8 489.8 1095.8 489.1 1103.2 489.2 Z" fill="none" stroke="#14202c" stroke-width="1"/>
<path d="M1051.4 557.4 C1050.4 554.6 1046.2 545.7 1045.3 540.6 C1044.4 535.5 1044.7 531.5 1046.0 526.9 C1047.3 522.3 1049.7 517.4 1052.9 513.1 C1056.1 508.8 1059.9 504.6 1065.0 501.0 C1070.1 497.4 1077.0 493.8 1083.4 491.8 C1089.8 489.8 1095.8 489.1 1103.2 489.2 C1110.6 489.3 1120.5 490.3 1127.6 492.5 C1134.7 494.7 1140.6 498.3 1145.9 502.5 C1151.2 506.7 1156.3 512.1 1159.7 517.7 C1163.1 523.3 1165.1 533.0 1166.2 536.0" fill="none" stroke="#e8002f" stroke-width="1.1"/>
<path d="M888.5 579.0 C888.6 577.6 888.5 573.8 889.1 570.6 C889.7 567.4 890.4 563.5 892.3 560.0 C894.2 556.5 897.2 552.9 900.7 549.4 C904.2 545.9 907.8 542.4 913.4 538.9 C919.0 535.4 927.5 531.0 934.5 528.3 C941.5 525.6 948.2 523.9 955.6 522.6 C963.0 521.3 971.9 520.4 978.9 520.3 C985.9 520.2 991.2 520.5 997.9 522.0 C1004.6 523.5 1012.7 526.1 1019.0 529.4 C1025.3 532.7 1031.7 538.0 1035.9 542.0 C1040.1 546.0 1042.3 549.5 1044.4 553.7 C1046.5 557.9 1047.9 565.1 1048.6 567.4" fill="none" stroke="#e0002e" stroke-width="1.1"/>
<!-- hole 3 -->
<path d="M1454.5 548.1 C1452.6 549.2 1449.5 552.5 1447.9 556.3 C1446.3 560.1 1445.4 565.9 1445.1 571.1 C1444.8 576.3 1445.5 582.0 1446.3 587.5 C1447.0 593.0 1448.1 597.9 1449.6 603.9 C1451.1 609.9 1453.2 617.6 1455.3 623.6 C1457.3 629.6 1459.9 635.6 1461.9 640.0 C1464.0 644.4 1466.2 648.0 1467.6 649.9 C1469.0 651.8 1469.3 651.9 1470.1 651.6 C1470.9 651.3 1471.7 650.8 1472.2 648.3 C1472.7 645.8 1473.1 642.8 1472.9 636.8 C1472.7 630.8 1471.6 620.3 1470.9 612.1 C1470.2 603.9 1469.3 594.9 1468.5 587.5 C1467.7 580.1 1466.9 573.3 1466.0 567.8 C1465.1 562.3 1464.1 557.7 1463.0 554.6 C1461.9 551.5 1460.8 550.5 1459.4 549.4 C1458.0 548.3 1456.4 547.0 1454.5 548.1 Z" fill="url(#gh3)"/>
<path d="M1454.5 548.1 C1452.6 549.2 1449.5 552.5 1447.9 556.3 C1446.3 560.1 1445.4 565.9 1445.1 571.1 C1444.8 576.3 1445.5 582.0 1446.3 587.5 C1447.0 593.0 1448.1 597.9 1449.6 603.9 C1451.1 609.9 1453.2 617.6 1455.3 623.6 C1457.3 629.6 1459.9 635.6 1461.9 640.0 C1464.0 644.4 1466.2 648.0 1467.6 649.9 C1469.0 651.8 1469.3 651.9 1470.1 651.6 C1470.9 651.3 1471.7 650.8 1472.2 648.3 C1472.7 645.8 1473.1 642.8 1472.9 636.8 C1472.7 630.8 1471.6 620.3 1470.9 612.1 C1470.2 603.9 1469.3 594.9 1468.5 587.5 C1467.7 580.1 1466.9 573.3 1466.0 567.8 C1465.1 562.3 1464.1 557.7 1463.0 554.6 C1461.9 551.5 1460.8 550.5 1459.4 549.4 C1458.0 548.3 1456.4 547.0 1454.5 548.1 Z" fill="none" stroke="#0a1724" stroke-width="1"/>
<!-- measurement -->
<path d="M759 592 L815.8 419.8 L841 419.8" fill="none" stroke="#ffffff" stroke-width="1.1"/>
<path d="M631 605.2 L888 578.5" fill="none" stroke="#ffffff" stroke-width="2"/>
<circle cx="630.9" cy="605.2" r="3.8" fill="#707070"/>
<circle cx="759.2" cy="592.3" r="3.6" fill="#a8a8a8"/>
<circle cx="888.3" cy="578.8" r="3.8" fill="#686868" stroke="#3a3a3a" stroke-width=".8"/>
<circle cx="839.5" cy="419.5" r="3.5" fill="#808080"/>
</g></svg>
<div style="left:841px;top:406px;width:134px;height:46px;background:#fff;border:1px solid #fff;"></div>
<div style="left:842px;top:407px;width:132px;height:44px;background:#fff;border:1px solid #9a9da0;"></div>
<div style="left:843px;top:408px;width:130px;height:21.5px;background:linear-gradient(#f7f8f9,#e2e4e6);border-bottom:1px solid #c9ccce;"></div>
<div style="left:893px;top:430px;width:1px;height:20px;background:#dfe2e4;"></div>
<div style="left:944px;top:430px;width:1px;height:20px;background:#dfe2e4;"></div>
<div style="left:843px;top:430px;width:50px;height:20px;background:#f7f8f9;"></div>
<span class="t" style="left:844.7px;top:410.6px;font-size:12px;line-height:16px;color:#1f2a33;letter-spacing:-0.246px;">All References</span>
<div style="left:955px;top:412px;width:13.5px;height:11px;background:#6a6d72;border-radius:3px;"></div>
<div style="left:958px;top:416.8px;width:7.5px;height:1.5px;background:#fff;"></div>
<span class="t" style="left:846.0px;top:431.7px;font-size:12px;line-height:16px;color:#1f2a33;letter-spacing:-0.148px;">Distance</span>
<span class="t" style="left:896.6px;top:431.7px;font-size:12px;line-height:16px;color:#686b6e;font-weight:700;letter-spacing:0.273px;">4.42770</span>
<span class="t" style="left:947.6px;top:431.4px;font-size:12.8px;line-height:16px;color:#3a4248;letter-spacing:0.486px;">mm</span>
<div style="left:883px;top:169px;width:396px;height:32.5px;background:#ffffff;border:1px solid #c7d3d8;"></div>
<svg style="left:890px;top:176px;" width="18" height="18" viewBox="0 0 18 18"><rect x="1.500" y="1.500" width="13.500" height="13.500" fill="#fafbfc" stroke="#a9adb0"/><circle cx="8" cy="8" r="4.600" fill="#e4f4fb" stroke="#2d86b3" stroke-width="1.300"/><path d="M11.500 11.500 L15.500 15.500" stroke="#a9adb0" stroke-width="2.600"/><path d="M11.500 11.500 L15.500 15.500" stroke="#e8eaeb" stroke-width="1"/></svg>
<svg style="left:916px;top:176px;" width="18" height="18" viewBox="0 0 18 18"><circle cx="7" cy="7" r="5.600" fill="#f2fafd" stroke="#2d86b3" stroke-width="1.300"/><path d="M7 4 V10 M4 7 H10" stroke="#1d5f86" stroke-width="2"/><path d="M11.200 11.200 L16.500 16.500" stroke="#a9adb0" stroke-width="2.800"/><path d="M11.500 11.500 L16.300 16.300" stroke="#ececec" stroke-width="1"/></svg>
<svg style="left:942px;top:176px;" width="18" height="18" viewBox="0 0 18 18"><circle cx="7" cy="7" r="5.600" fill="#f2fafd" stroke="#2d86b3" stroke-width="1.300"/><path d="M4 7 H10" stroke="#1d5f86" stroke-width="2"/><path d="M11.200 11.200 L16.500 16.500" stroke="#a9adb0" stroke-width="2.800"/><path d="M11.500 11.500 L16.300 16.300" stroke="#ececec" stroke-width="1"/></svg>
<svg style="left:968px;top:176px;" width="18" height="18" viewBox="0 0 18 18"><defs><linearGradient id="rp" x1="0" y1="0" x2="1" y2="1"><stop offset="0" stop-color="#d8f0fa"/><stop offset="1" stop-color="#58b4dc"/></linearGradient></defs><rect x="1.500" y="1.500" width="14.500" height="14.500" fill="url(#rp)" stroke="#a9adb0"/><path d="M2 15.500 V5.500 C7 3.500 11 4 13 5.500 L4 15.500 Z" fill="#fdfdfd"/><path d="M4 15.500 L14 6" stroke="#1d5f86" stroke-width="1.800"/></svg>
<svg style="left:994px;top:176px;" width="18" height="18" viewBox="0 0 18 18"><defs><radialGradient id="sp1" cx=".35" cy=".3" r=".75"><stop offset="0" stop-color="#ffffff"/><stop offset=".55" stop-color="#dcdcdc"/><stop offset="1" stop-color="#8e8e8e"/></radialGradient><linearGradient id="sp2" x1="0" y1="0" x2="1" y2=".6"><stop offset="0" stop-color="#ffffff"/><stop offset=".5" stop-color="#d4d4d4"/><stop offset="1" stop-color="#7e7e7e"/></linearGradient></defs><path d="M8 4 C11 3.500 14 2.500 16 .5 V11 C14 12.500 11 12.500 9 11.500 Z" fill="url(#sp2)"/><circle cx="6" cy="11.500" r="5" fill="url(#sp1)"/><path d="M17 14 V17 H14 Z" fill="#555"/></svg>
<svg style="left:1020px;top:176px;" width="18" height="18" viewBox="0 0 18 18"><path d="M1.500 5.500 L5.500 1.500 H16 V11.500 L12 15.500 H1.500 Z" fill="#8fd0ea" stroke="#15587f" stroke-width="1.200"/><rect x="1.500" y="5.500" width="10.500" height="10" fill="#ffffff" stroke="#15587f" stroke-width="1.200"/><path d="M12 5.500 L16 1.500" stroke="#15587f" stroke-width="1.200"/><path d="M2.500 5 L6 2.200 H14.500 L11.800 5 Z" fill="#c4e8f5"/><path d="M17 14 V17 H14 Z" fill="#555"/></svg>
<svg style="left:1046px;top:176px;" width="18" height="18" viewBox="0 0 18 18"><path d="M1 8 L4.500 2 H13 L16 8 L13 15 H4.500 Z" fill="#d9f2fb" stroke="#5bb4d9" stroke-width="1"/><path d="M1 8 H10 L13 2 M10 8 L13 15" fill="none" stroke="#5bb4d9" stroke-width="1"/><path d="M10 8 L12.500 2.500 L15.500 8 Z" fill="#4a9dc8"/><rect x="10.500" y="10" width="5" height="6.500" fill="#fff" stroke="#777" stroke-width=".8"/><path d="M12 12 H14 M12 14 H14" stroke="#444" stroke-width=".9"/><path d="M17 14 V17 H14 Z" fill="#555"/></svg>
<svg style="left:1072px;top:176px;" width="18" height="18" viewBox="0 0 18 18"><rect x="1.500" y="1.500" width="12" height="13.500" fill="#fff" stroke="#a9adb0" stroke-width=".9"/><path d="M1.500 4.500 H13.500 M1.500 7.500 H13.500 M1.500 10.500 H13.500 M5.500 4.500 V15" stroke="#a9adb0" stroke-width=".8"/><path d="M2 14 H8" stroke="#5bb4d9" stroke-width="1.200"/><path d="M6.500 10.500 H9 L10 9 H13.500 L14.500 10.500 H17 V16.500 H6.500 Z" fill="#3a3d40"/><circle cx="11.800" cy="13.400" r="2.300" fill="#9da1a5" stroke="#1a1c1e" stroke-width=".9"/></svg>
<svg style="left:1098px;top:176px;" width="18" height="18" viewBox="0 0 18 18"><path d="M1.500 4.500 L12 1.500 L16.500 2.500 V11.500 L12.500 16.500 L3.500 12.500 Z" fill="#bfe6f6" stroke="#4aa6d0" stroke-width="1.100"/><path d="M1.500 4.500 L12.500 6.500 V16.500 M12.500 6.500 L16.500 2.500" fill="none" stroke="#4aa6d0" stroke-width="1.100"/><path d="M5 9 L11 8.500 L11.500 14.500 L5.500 12 Z" fill="#e6f6fc" opacity=".8"/></svg>
<svg style="left:1124px;top:176px;" width="20" height="18" viewBox="0 0 20 18"><path d="M1 1.500 L5 5.500 M5 1.500 L1 5.500" stroke="#8a5a14" stroke-width="1.500"/><path d="M10.800 1 L9.300 4.500 M8.300 7 L6.300 11.500 M5.300 14 L4 17" stroke="#8a5a14" stroke-width="1.700"/><path d="M6.500 8.500 L5.300 11.500" stroke="#8a5a14" stroke-width="1.700" transform="translate(-2.500 1)"/><path d="M11.500 9 V14 H16.500 M11.500 14 L8.500 16.500" stroke="#6a450f" stroke-width="1.300" fill="none"/><path d="M10.200 10.300 L11.500 7.800 L12.800 10.300 Z M15.300 12.700 L17.800 14 L15.300 15.300 Z M7.700 15.200 L7.600 17.700 L10 17 Z" fill="#6a450f"/><path d="M19.500 15.500 V18 H17 Z" fill="#555"/></svg>
<svg style="left:1150px;top:176px;" width="18" height="18" viewBox="0 0 18 18"><rect x=".6" y="1.600" width="9.500" height="6" fill="#fdf5dc" stroke="#8e9296" stroke-width="1"/><path d="M10 4.500 H16 L13 10" fill="none" stroke="#333" stroke-width="1.200"/><path d="M11.500 8.500 L13 11.500 L15.500 9.500 Z" fill="#333"/><path d="M7.500 14.500 C9.500 11.500 14.500 11.500 16.500 14.500 C14.500 17.500 9.500 17.500 7.500 14.500 Z" fill="#33373b"/><circle cx="12" cy="14.500" r="1.700" fill="#fff"/><circle cx="12" cy="14.500" r=".8" fill="#33373b"/></svg>
<svg style="left:1176px;top:176px;" width="18" height="18" viewBox="0 0 18 18"><path d="M3 4 L8 9.500 L3 15 M8 9.500 H13.500" fill="none" stroke="#333" stroke-width="1.100"/><circle cx="3.200" cy="3.800" r="2.300" fill="#7fbf7b" stroke="#4a9a48" stroke-width=".7"/><circle cx="3.200" cy="15" r="2.300" fill="#4a9cc8" stroke="#2d7ba3" stroke-width=".7"/><circle cx="13.800" cy="9.500" r="2.300" fill="#ee7f7f" stroke="#c85555" stroke-width=".7"/></svg>
<svg style="left:1202px;top:176px;" width="18" height="18" viewBox="0 0 18 18"><path d="M8.500 2.500 L15 14.500 H2 Z M8.500 7 L5.500 12.500 H11.500 Z" fill="#c9cbcd" stroke="#aeb1b4" stroke-width="1" fill-rule="evenodd"/><rect x="11" y="11.500" width="5.500" height="5" fill="#c4c6c8"/><path d="M12 11.500 V10 Q13.800 8 15.500 10 V11.500" fill="none" stroke="#c4c6c8" stroke-width="1"/></svg>
<svg style="left:1228px;top:176px;" width="18" height="18" viewBox="0 0 18 18"><rect x="3" y="3.500" width="3.800" height="11" fill="#b4b6b8"/><rect x="10" y="3.500" width="3.800" height="11" fill="#b4b6b8"/></svg>
<svg style="left:1254px;top:176px;" width="18" height="18" viewBox="0 0 18 18"><defs><linearGradient id="lg14" x1="0" y1="0" x2="1" y2="0"><stop offset="0" stop-color="#c8cacc"/><stop offset=".6" stop-color="#eeeeef"/><stop offset="1" stop-color="#cfd1d3"/></linearGradient></defs><path d="M2 3.500 H17.500 V14 H4.500 C8 12.500 8 8.500 6 6.500 C5 5.500 3.500 5 2 4.500 Z" fill="url(#lg14)" stroke="#c4c6c8" stroke-width=".6"/></svg>
<div style="left:0px;top:0px;width:1912px;height:28px;background:#fafafa;"></div>
<svg style="left:8px;top:6px;" width="16" height="16" viewBox="0 0 16 16"><path d="M1.5 3.5 L4 1.5 H14.5 V12.5 L12 14.5 H1.5 Z" fill="#7fd0ee" stroke="#2f8fb8" stroke-width="1"/><path d="M1.5 3.5 H12 V14.5 M12 3.5 L14.5 1.5" fill="none" stroke="#2f8fb8" stroke-width="1"/><rect x="2.5" y="4.5" width="8.5" height="9" fill="#a5e0f5"/></svg>
<span class="t" style="left:28.4px;top:3.6px;font-size:16.5px;line-height:20px;color:#45494d;transform:scaleX(1.1367);transform-origin:0 0;">creo</span>
<div style="left:66px;top:9.5px;width:2px;height:2px;background:#6a6e72;border-radius:1px;"></div>
<div style="left:80px;top:2px;width:1px;height:24px;background:#d0d0d0;"></div>
<div style="left:341px;top:2px;width:1px;height:24px;background:#d0d0d0;"></div>
<svg style="left:88px;top:5px;" width="16" height="18" viewBox="0 0 16 18"><path d="M2.5 1.5 H9.5 L13.5 5.5 V16.5 H2.5 Z" fill="#fff" stroke="#6a6f73"/><path d="M9.5 1.5 V5.5 H13.5" fill="#e8eef2" stroke="#6a6f73"/></svg>
<svg style="left:110px;top:4px;" width="19" height="19" viewBox="0 0 19 19"><path d="M1.5 7.5 H6 L7.5 9 H14.5 V17.5 H1.5 Z" fill="#f3c77a" stroke="#a9772b"/><path d="M1.5 17.5 L4.5 11.5 H17.5 L14.5 17.5 Z" fill="#fbe3ae" stroke="#a9772b"/><path d="M9 6 C10 3 13 2.5 15 4.5 M15.5 1.5 V5 H12" fill="none" stroke="#333" stroke-width="1.4"/></svg>
<svg style="left:136px;top:6px;" width="16" height="16" viewBox="0 0 16 16"><path d="M0.5 0.5 H15.5 V15.5 H0.5 Z" fill="#c9cbcd" stroke="#b0b3b5"/><rect x="3" y="1" width="10" height="6" fill="#f4f4f4"/><rect x="4" y="10" width="8" height="5.5" fill="#e0e1e2"/><rect x="5" y="11" width="2.5" height="4" fill="#b7babc"/></svg>
<svg style="left:159px;top:6px;" width="18" height="16" viewBox="0 0 18 16"><path d="M4 8.5 C6 3.5 13.5 3.5 14.5 9 C15 12 13 14 11 14.5" fill="none" stroke="#2d3236" stroke-width="2"/><path d="M1 4.5 L8 6.5 L3 11.5 Z" fill="#2d3236"/></svg>
<svg style="left:182.5px;top:12.5px;" width="7" height="4" viewBox="0 0 7 4"><path d="M0 0 H7 L3.5 4 Z" fill="#b4b6b8"/></svg>
<svg style="left:197px;top:6px;" width="18" height="16" viewBox="0 0 18 16"><path d="M14 8.5 C12 3.5 4.5 3.5 3.5 9 C3 12 5 14 7 14.5" fill="none" stroke="#b4b6b8" stroke-width="2"/><path d="M17 4.5 L10 6.5 L15 11.5 Z" fill="#b4b6b8"/></svg>
<svg style="left:220.5px;top:12.5px;" width="7" height="4" viewBox="0 0 7 4"><path d="M0 0 H7 L3.5 4 Z" fill="#b4b6b8"/></svg>
<svg style="left:234px;top:5px;" width="17" height="18" viewBox="0 0 17 18"><rect x="1.500" y="2.500" width="3" height="3" fill="#fff" stroke="#5aa9d0" stroke-width=".9"/><rect x="1.500" y="8" width="3" height="3" fill="#fff" stroke="#5aa9d0" stroke-width=".9"/><rect x="1.500" y="13.500" width="3" height="3" fill="#fff" stroke="#5aa9d0" stroke-width=".9"/><path d="M6.500 12.500 H15 M6.500 15 H15" stroke="#8a8d90" stroke-width="1"/><path d="M7 5.500 H13 M9.500 3 L7 5.500 L9.500 8" fill="none" stroke="#1c5f86" stroke-width="1.700"/><path d="M10 3.500 H16 M13.500 1 L16 3.500 L13.500 6" fill="none" stroke="#1c5f86" stroke-width="1.700"/></svg>
<svg style="left:258px;top:6px;" width="17" height="17" viewBox="0 0 17 17"><rect x="1.700" y="2" width="5.800" height="5.500" fill="#fff" stroke="#a8a8a8" stroke-width="1.300"/><rect x="10" y="2" width="5.800" height="5.500" fill="#fff" stroke="#a8a8a8" stroke-width="1.300"/><rect x="1.700" y="10" width="6" height="5.800" fill="#fff" stroke="#a8a8a8" stroke-width="1.300"/><rect x="5.500" y="6" width="8.800" height="6.500" rx="1.300" fill="#e6f3fa" stroke="#1c5f86" stroke-width="1.500"/></svg>
<svg style="left:282px;top:12.5px;" width="7" height="4" viewBox="0 0 7 4"><path d="M0 0 H7 L3.5 4 Z" fill="#555"/></svg>
<svg style="left:298.5px;top:8.5px;" width="14" height="12" viewBox="0 0 14 12"><path d="M3 2.500 L11 9.500 M11 2.500 L3 9.500" stroke="#2d3236" stroke-width="4.400" stroke-linecap="round"/><path d="M3 2.500 L11 9.500 M11 2.500 L3 9.500" stroke="#fff" stroke-width="2" stroke-linecap="round"/></svg>
<svg style="left:321px;top:7px;" width="16" height="14" viewBox="0 0 16 14"><path d="M1.700 7.300 L6.100 11.700 L14.900 2.500" fill="none" stroke="#c6c8ca" stroke-width="2.200"/></svg>
<svg style="left:348px;top:10px;" width="10" height="9" viewBox="0 0 10 9"><path d="M.7 1.300 H9.900" stroke="#33373b" stroke-width="1"/><path d="M1.500 3 H9 L5.300 7.800 Z" fill="#33373b"/></svg>
<span class="t" style="left:790.7px;top:6.2px;font-size:12.5px;line-height:16px;color:#8d8f91;letter-spacing:-0.124px;">ROTOR_RING_MOM_CONCEPT1 (Active) - Creo Parametric</span>
<div style="left:1845px;top:15px;width:10px;height:1px;background:#9a9c9e;height:1.5px;"></div>
<svg style="left:1870px;top:9px;" width="13" height="10" viewBox="0 0 13 10"><rect x="3.5" y="0.5" width="8" height="5.500" fill="none" stroke="#9a9c9e"/><rect x="0.5" y="3.5" width="8" height="5.500" fill="#fafafa" stroke="#9a9c9e"/></svg>
<svg style="left:1898px;top:9px;" width="10" height="10" viewBox="0 0 10 10"><path d="M0.8 0.8 L9.2 9.2 M9.2 0.8 L0.8 9.2" stroke="#9a9c9e" stroke-width="1.4"/></svg>
<div style="left:0px;top:28px;width:1912px;height:27px;background:#3b4446;"></div>
<div style="left:0px;top:28px;width:59px;height:27px;background:linear-gradient(90deg,#4aa83a 0%,#5fba45 45%,#3f9a33 100%);"></div>
<div style="left:144px;top:28px;width:93px;height:28px;background:#ffffff;"></div>
<div style="left:152px;top:34px;width:71px;height:16px;background:#fff34d;"></div>
<span class="t" style="left:19.4px;top:33.9px;font-size:13.3px;line-height:18px;color:#ffffff;letter-spacing:-0.484px;">File</span>
<span class="t" style="left:81.4px;top:33.9px;font-size:13.3px;line-height:18px;color:#ffffff;letter-spacing:0.516px;">Model</span>
<span class="t" style="left:166.8px;top:33.9px;font-size:13.3px;line-height:18px;color:#3d7d2a;letter-spacing:-0.377px;">Analysis</span>
<span class="t" style="left:259.8px;top:33.9px;font-size:13.3px;line-height:18px;color:#ffffff;letter-spacing:-0.167px;">Annotate</span>
<span class="t" style="left:358.4px;top:33.9px;font-size:13.3px;line-height:18px;color:#ffffff;letter-spacing:0.051px;">Tools</span>
<span class="t" style="left:436.2px;top:33.9px;font-size:13.3px;line-height:18px;color:#ffffff;letter-spacing:-0.198px;">View</span>
<span class="t" style="left:510.4px;top:33.9px;font-size:13.3px;line-height:18px;color:#ffffff;letter-spacing:0.007px;">Flexible Modeling</span>
<span class="t" style="left:660.4px;top:33.9px;font-size:13.3px;line-height:18px;color:#ffffff;letter-spacing:-0.025px;">Applications</span>
<svg style="left:1598px;top:34px;" width="11" height="7" viewBox="0 0 11 7"><path d="M1 6.2 L5.5 1.500 L10 6.2" fill="none" stroke="#fff" stroke-width="2.2"/></svg>
<div style="left:1616px;top:30px;width:216px;height:22.5px;background:#fff;border:1px solid #9aa0a3;"></div>
<div style="left:1834.5px;top:29px;width:23.5px;height:23.5px;background:#dcdfe1;border:1px solid #b9bdc0;"></div>
<svg style="left:1838px;top:32px;" width="17" height="17" viewBox="0 0 17 17"><circle cx="8.500" cy="8.500" r="8" fill="#2d3236"/><circle cx="9.500" cy="7.500" r="3.400" fill="none" stroke="#fff" stroke-width="1.6"/><path d="M7.2 10 L4 13.200" stroke="#fff" stroke-width="2"/></svg>
<svg style="left:1863px;top:35px;" width="15" height="12" viewBox="0 0 15 12"><path d="M0.5 4 L7.500 0.8 L14.5 4 L7.500 7.2 Z" fill="#fff"/><path d="M3.500 6.500 V9.500 C5.500 11.500 9.500 11.500 11.500 9.500 V6.500 L7.500 8.500 Z" fill="#fff"/></svg>
<svg style="left:1884px;top:39px;" width="8" height="4" viewBox="0 0 8 4"><path d="M0 0 H8 L4.0 4 Z" fill="#fff"/></svg>
<span class="t" style="left:1903.9px;top:33.0px;font-size:13px;line-height:16px;color:#fff;font-weight:700;">?</span>
<div style="left:0px;top:55px;width:1912px;height:106px;background:#ffffff;"></div>
<div style="left:0px;top:161px;width:1912px;height:1px;background:#a2aaac;"></div>
<div style="left:148px;top:57.5px;width:1px;height:101px;background:#c9cccf;"></div>
<div style="left:419px;top:57.5px;width:1px;height:101px;background:#c9cccf;"></div>
<div style="left:551px;top:57.5px;width:1px;height:101px;background:#c9cccf;"></div>
<div style="left:611px;top:57.5px;width:1px;height:101px;background:#c9cccf;"></div>
<div style="left:683px;top:57.5px;width:1px;height:101px;background:#c9cccf;"></div>
<div style="left:1038px;top:57.5px;width:1px;height:101px;background:#c9cccf;"></div>
<div style="left:1334px;top:57.5px;width:1px;height:101px;background:#c9cccf;"></div>
<span class="t" style="left:26.9px;top:60.8px;font-size:12px;line-height:16px;color:#1f2a33;letter-spacing:-0.173px;">Analysis</span>
<span class="t" style="left:26.9px;top:87.9px;font-size:12px;line-height:16px;color:#1f2a33;letter-spacing:-0.285px;">Saved Analysis</span>
<span class="t" style="left:26.9px;top:113.7px;font-size:12px;line-height:16px;color:#1f2a33;letter-spacing:0.124px;">Performance Monitor</span>
<span class="t" style="left:46.9px;top:141.8px;font-size:12px;line-height:16px;color:#1f2a33;letter-spacing:0.054px;">Manage</span>
<svg style="left:94.3px;top:147.5px;" width="7" height="4" viewBox="0 0 7 4"><path d="M0 0 H7 L3.5 4 Z" fill="#555"/></svg>
<span class="t" style="left:175.9px;top:60.8px;font-size:12px;line-height:16px;color:#b3b7ba;letter-spacing:-0.122px;">User-Defined Analysis</span>
<span class="t" style="left:175.9px;top:87.9px;font-size:12px;line-height:16px;color:#1f2a33;letter-spacing:-0.229px;">Excel Analysis</span>
<span class="t" style="left:175.9px;top:113.7px;font-size:12px;line-height:16px;color:#b3b7ba;letter-spacing:-0.065px;">Toolkit-Based</span>
<span class="t" style="left:319.1px;top:60.8px;font-size:12px;line-height:16px;color:#b3b7ba;letter-spacing:-0.006px;">Mathcad Analysis</span>
<span class="t" style="left:319.1px;top:87.9px;font-size:12px;line-height:16px;color:#b3b7ba;letter-spacing:-0.100px;">Prime Analysis</span>
<span class="t" style="left:319.1px;top:113.7px;font-size:12px;line-height:16px;color:#1f2a33;letter-spacing:-0.182px;">External Analysis</span>
<span class="t" style="left:264.0px;top:141.8px;font-size:12px;line-height:16px;color:#1f2a33;letter-spacing:0.076px;">Custom</span>
<span class="t" style="left:447.0px;top:60.8px;font-size:12px;line-height:16px;color:#1f2a33;letter-spacing:-0.254px;">Mass Properties</span>
<svg style="left:537px;top:67.5px;" width="7" height="4" viewBox="0 0 7 4"><path d="M0 0 H7 L3.5 4 Z" fill="#555"/></svg>
<span class="t" style="left:447.0px;top:87.9px;font-size:12px;line-height:16px;color:#1f2a33;letter-spacing:-0.265px;">Short Edge</span>
<span class="t" style="left:447.0px;top:113.7px;font-size:12px;line-height:16px;color:#1f2a33;letter-spacing:-0.337px;">Thickness</span>
<span class="t" style="left:444.1px;top:141.8px;font-size:12px;line-height:16px;color:#1f2a33;letter-spacing:-0.004px;">Model Report</span>
<svg style="left:519.8px;top:147.5px;" width="7" height="4" viewBox="0 0 7 4"><path d="M0 0 H7 L3.5 4 Z" fill="#555"/></svg>
<div style="left:555px;top:57.5px;width:52.7px;height:78px;background:#e3e5e7;border:1px solid #b4b8bb;"></div>
<div style="left:556px;top:96.5px;width:50.7px;height:1px;background:#b4b8bb;"></div>
<div style="left:558px;top:137px;width:49px;height:24px;background:#fff34d;"></div>
<span class="t" style="left:559.0px;top:101.8px;font-size:12px;line-height:16px;color:#1f2a33;letter-spacing:-0.184px;">Measure</span>
<svg style="left:578px;top:121.8px;" width="7" height="4" viewBox="0 0 7 4"><path d="M0 0 H7 L3.5 4 Z" fill="#555"/></svg>
<span class="t" style="left:559.8px;top:141.8px;font-size:12px;line-height:16px;color:#1f2a33;letter-spacing:-0.155px;">Measure</span>
<span class="t" style="left:618.4px;top:101.8px;font-size:12px;line-height:16px;color:#b3b7ba;letter-spacing:0.157px;">Simulation</span>
<span class="t" style="left:631.8px;top:116.6px;font-size:12px;line-height:16px;color:#b3b7ba;letter-spacing:-0.086px;">Probe</span>
<span class="t" style="left:631.8px;top:141.8px;font-size:12px;line-height:16px;color:#1f2a33;letter-spacing:-0.058px;">Query</span>
<span class="t" style="left:710.9px;top:60.8px;font-size:12px;line-height:16px;color:#1f2a33;letter-spacing:-0.130px;">Geometry Report</span>
<svg style="left:807.8px;top:67.5px;" width="7" height="4" viewBox="0 0 7 4"><path d="M0 0 H7 L3.5 4 Z" fill="#555"/></svg>
<span class="t" style="left:710.9px;top:87.9px;font-size:12px;line-height:16px;color:#1f2a33;letter-spacing:0.037px;">Draft</span>
<span class="t" style="left:710.9px;top:113.7px;font-size:12px;line-height:16px;color:#b3b7ba;letter-spacing:0.042px;">Build Direction</span>
<span class="t" style="left:842.9px;top:60.8px;font-size:12px;line-height:16px;color:#1f2a33;letter-spacing:-0.338px;">Pairs Clearance</span>
<svg style="left:929.5px;top:67.5px;" width="7" height="4" viewBox="0 0 7 4"><path d="M0 0 H7 L3.5 4 Z" fill="#555"/></svg>
<span class="t" style="left:842.9px;top:87.9px;font-size:12px;line-height:16px;color:#1f2a33;letter-spacing:-0.229px;">Mesh Surface</span>
<span class="t" style="left:842.9px;top:113.7px;font-size:12px;line-height:16px;color:#1f2a33;letter-spacing:0.046px;">Dihedral Angle</span>
<span class="t" style="left:964.8px;top:60.8px;font-size:12px;line-height:16px;color:#1f2a33;letter-spacing:0.057px;">Curvature</span>
<svg style="left:1024px;top:67.5px;" width="7" height="4" viewBox="0 0 7 4"><path d="M0 0 H7 L3.5 4 Z" fill="#555"/></svg>
<span class="t" style="left:808.4px;top:141.8px;font-size:12px;line-height:16px;color:#1f2a33;letter-spacing:-0.057px;">Inspect Geometry</span>
<svg style="left:906px;top:147.5px;" width="7" height="4" viewBox="0 0 7 4"><path d="M0 0 H7 L3.5 4 Z" fill="#555"/></svg>
<span class="t" style="left:1046.8px;top:101.8px;font-size:12px;line-height:16px;color:#1f2a33;letter-spacing:0.055px;">Dimension</span>
<span class="t" style="left:1045.4px;top:116.8px;font-size:12px;line-height:16px;color:#1f2a33;letter-spacing:-0.042px;">Boundaries</span>
<span class="t" style="left:1132.4px;top:60.8px;font-size:12px;line-height:16px;color:#b3b7ba;letter-spacing:-0.079px;">Sensitivity Analysis</span>
<span class="t" style="left:1132.4px;top:87.9px;font-size:12px;line-height:16px;color:#b3b7ba;letter-spacing:0.134px;">Feasibility/Optimization</span>
<svg style="left:1265.5px;top:94.5px;" width="7" height="4" viewBox="0 0 7 4"><path d="M0 0 H7 L3.5 4 Z" fill="#b8bbbd"/></svg>
<span class="t" style="left:1132.4px;top:113.7px;font-size:12px;line-height:16px;color:#b3b7ba;letter-spacing:-0.128px;">Statistical Design Study</span>
<span class="t" style="left:1152.4px;top:141.8px;font-size:12px;line-height:16px;color:#1f2a33;letter-spacing:-0.131px;">Design Study</span>
<span class="t" style="left:1280.4px;top:101.8px;font-size:12px;line-height:16px;color:#b3b7ba;letter-spacing:0.077px;">Simulate</span>
<span class="t" style="left:1282.0px;top:117.0px;font-size:12px;line-height:16px;color:#b3b7ba;letter-spacing:-0.211px;">Analysis</span>
<svg style="left:7px;top:60.5px;" width="17" height="17" viewBox="0 0 17 17"><path d="M1.500 1.500 L5.500 5.500 M5.500 1.500 L1.500 5.500" stroke="#8a5a14" stroke-width="1.300"/><path d="M13.500 .5 L9.500 8.500" stroke="#8a5a14" stroke-width="1.500" stroke-dasharray="3 1.500"/><rect x=".5" y="10.500" width="15" height="5" fill="#f4f5f6" stroke="#8e9296" stroke-width="1"/><path d="M3 15 V13 M5 15 V13.500 M7 15 V13 M9 15 V13.500 M11 15 V13 M13 15 V13.500" stroke="#8e9296" stroke-width=".8"/></svg>
<svg style="left:7px;top:87.5px;" width="17" height="17" viewBox="0 0 17 17"><path d="M.5 3 V6.500 H7 M2.500 4.500 V6.500 M4.500 3.500 V6.500 M6.500 4.500 V6.500 M8.500 3.500 V6 M10.500 4.500 V6 M12.500 3.500 V6 M14.500 4.500 V6" stroke="#6a6d70" stroke-width=".9" fill="none"/><path d="M6.500 6.500 H15.500 V16 H6.500 Z" fill="#7b7f84"/><rect x="8.500" y="6.500" width="5.500" height="4" fill="#f4f5f6"/><rect x="8.500" y="12" width="5.500" height="4" fill="#b8dff2"/><rect x="9.500" y="13" width="1.800" height="3" fill="#3d8fbd"/></svg>
<svg style="left:7px;top:113.5px;" width="17" height="17" viewBox="0 0 17 17"><path d="M.8 0 V15.500 H16" stroke="#6a6d70" stroke-width="1" fill="none"/><path d="M.8 2 H2.500 M.8 5 H2.200 M.8 8 H2.500 M.8 11 H2.200 M4 15.500 V14 M7 15.500 V13.500 M10 15.500 V14 M13 15.500 V13.500" stroke="#6a6d70" stroke-width=".8"/><path d="M3 13 L8 5.500 L10 10.500 L15.500 1.500" fill="none" stroke="#2b8cbc" stroke-width="1.400"/></svg>
<svg style="left:155.5px;top:60.5px;" width="17" height="17" viewBox="0 0 17 17"><path d="M.5 11 L10.500 1 L14.500 5 L4.500 15 Z" fill="#e8e9ea" stroke="#c4c6c9"/><circle cx="12" cy="8.500" r="2.300" fill="#e4e5e6" stroke="#c4c6c9"/><path d="M8 15.500 C8 11.500 16 11.500 16 15.500 Z" fill="#d6d8da" stroke="#c4c6c9"/></svg>
<svg style="left:155.5px;top:87.5px;" width="17" height="17" viewBox="0 0 17 17"><rect x=".5" y=".5" width="15" height="10.500" fill="#fff" stroke="#8e9296" stroke-width=".9"/><rect x=".5" y=".5" width="15" height="3" fill="#2b86b8"/><path d="M.5 6.500 H15.500 M5.500 .5 V11 M10.500 .5 V11" stroke="#8e9296" stroke-width=".8"/><rect x="8" y=".5" width="2.500" height="10.500" fill="#2b86b8"/><path d="M.5 3.500 H15.500" stroke="#fff" stroke-width=".7"/><path d="M0.5 15.5 H15.5" stroke="#7d8185" stroke-width="1"/><path d="M0.5 15.5 V13.3 M2.6 15.5 V14.1 M4.8 15.5 V14.1 M6.9 15.5 V13.3 M9.1 15.5 V14.1 M11.2 15.5 V14.1 M13.4 15.5 V13.3 M15.5 15.5 V14.1 " stroke="#7d8185" stroke-width=".8"/></svg>
<svg style="left:155.5px;top:113.5px;" width="17" height="17" viewBox="0 0 17 17"><rect x="6.500" y=".5" width="9" height="7" fill="#ececed" stroke="#c4c6c9"/><path d="M0 4 H6 M4 2.500 L6 4 L4 5.500 M10.500 7.500 V11 H1 M3 9.500 L1 11 L3 12.500" stroke="#c4c6c9" stroke-width="1" fill="none"/><path d="M0.5 15.5 H15.5" stroke="#c4c6c9" stroke-width="1"/><path d="M0.5 15.5 V13.3 M2.6 15.5 V14.1 M4.8 15.5 V14.1 M6.9 15.5 V13.3 M9.1 15.5 V14.1 M11.2 15.5 V14.1 M13.4 15.5 V13.3 M15.5 15.5 V14.1 " stroke="#c4c6c9" stroke-width=".8"/></svg>
<svg style="left:299px;top:60.5px;" width="17" height="17" viewBox="0 0 17 17"><rect x=".5" y=".5" width="15" height="15" rx="1" fill="#e4e5e6" stroke="#c4c6c9"/><path d="M3 13 V4 L5.500 4 L8 10 L10.500 4 L13 4 V13 M6 13 V8" stroke="#b4b6b9" stroke-width="1.600" fill="none"/></svg>
<span class="t" style="left:298.9px;top:88.5px;font-size:16px;line-height:18px;color:#cfd1d3;font-weight:700;">M</span>
<span class="t" style="left:312.4px;top:85.0px;font-size:14px;line-height:14px;color:#cfd1d3;font-weight:700;">'</span>
<svg style="left:299px;top:113.5px;" width="17" height="17" viewBox="0 0 17 17"><path d="M.5 .8 H4.500 V4.500 M3 3.200 L4.500 5 L6 3.200 M9.500 5 V2 H14.500 M13 .5 L15 2 L13 3.500" stroke="#222" stroke-width="1" fill="none"/><rect x="3.500" y="5.500" width="8" height="7" rx="1" fill="#eef4f8" stroke="#555" stroke-width="1"/><path d="M0.5 15.5 H15.5" stroke="#7d8185" stroke-width="1"/><path d="M0.5 15.5 V13.3 M2.6 15.5 V14.1 M4.8 15.5 V14.1 M6.9 15.5 V13.3 M9.1 15.5 V14.1 M11.2 15.5 V14.1 M13.4 15.5 V13.3 M15.5 15.5 V14.1 " stroke="#7d8185" stroke-width=".8"/></svg>
<svg style="left:427px;top:60.5px;" width="17" height="17" viewBox="0 0 17 17"><path d="M5.500 2.500 Q8 -.5 10.500 2.500" fill="none" stroke="#444" stroke-width="1"/><path d="M.8 11 L4 3 H12 L15.500 9 L13 11.500 Z" fill="#e8edf0" stroke="#555" stroke-width=".9"/><path d="M12 3 L15.500 9 L13 11.500 L10.500 4.500 Z" fill="#b9c4cc" stroke="#555" stroke-width=".7"/><path d="M1 11 H13" stroke="#555" stroke-width=".9"/><path d="M0.5 15.5 H15.5" stroke="#7d8185" stroke-width="1"/><path d="M0.5 15.5 V13.3 M2.6 15.5 V14.1 M4.8 15.5 V14.1 M6.9 15.5 V13.3 M9.1 15.5 V14.1 M11.2 15.5 V14.1 M13.4 15.5 V13.3 M15.5 15.5 V14.1 " stroke="#7d8185" stroke-width=".8"/></svg>
<svg style="left:427px;top:87.5px;" width="17" height="17" viewBox="0 0 17 17"><path d="M4.500 .5 V3 M11.500 .5 V3 M4.500 1.800 H11.500" stroke="#222" stroke-width="1"/><path d="M4.500 4.500 H11.500 L15 12.500 H1 Z" fill="#eef0f2" stroke="#70757a" stroke-width=".9"/><path d="M4.300 5 H11.700 L12.500 7 H3.500 Z" fill="#41aee3"/><path d="M0.5 15.5 H15.5" stroke="#7d8185" stroke-width="1"/><path d="M0.5 15.5 V13.3 M2.6 15.5 V14.1 M4.8 15.5 V14.1 M6.9 15.5 V13.3 M9.1 15.5 V14.1 M11.2 15.5 V14.1 M13.4 15.5 V13.3 M15.5 15.5 V14.1 " stroke="#7d8185" stroke-width=".8"/></svg>
<svg style="left:427px;top:113.5px;" width="17" height="17" viewBox="0 0 17 17"><text x="0" y="5.500" font-size="6.500" font-weight="700" font-family="Liberation Sans,sans-serif" fill="#222">3D</text><path d="M10 1 V5 M15.500 1 V5 M10 3 H15.500" stroke="#222" stroke-width="1"/><path d="M.8 7.500 H6 V9.500 L8.500 7 H13 L15.500 5.500 V10.500 L13 13 H.8 Z" fill="#bfe3f4" stroke="#155f86" stroke-width="1.200"/><path d="M13 8 L15.500 5.500 V10.500 L13 13 Z" fill="#155f86"/><path d="M1.500 9 H7 L9 7.500 H12.500 V8.500" fill="none" stroke="#fff" stroke-width=".6"/><path d="M0.5 15.5 H15.5" stroke="#7d8185" stroke-width="1"/><path d="M0.5 15.5 V13.3 M2.6 15.5 V14.1 M4.8 15.5 V14.1 M6.9 15.5 V13.3 M9.1 15.5 V14.1 M11.2 15.5 V14.1 M13.4 15.5 V13.3 M15.5 15.5 V14.1 " stroke="#7d8185" stroke-width=".8"/></svg>
<svg style="left:564px;top:60px;" width="36" height="34" viewBox="0 0 36 34"><path d="M2 24 L27 2.500 L34 9.500 L9 31 Z" fill="#fdfdfd" stroke="#c4c7ca" stroke-width="1"/><path d="M8.500 25 L11.500 28.500 M11.300 22.700 L13.300 25 M14 20.300 L17 23.800 M16.800 18 L18.800 20.300 M19.500 15.600 L22.500 19.100 M22.300 13.300 L24.300 15.600 M25 10.900 L28 14.400 M27.800 8.600 L29.800 10.900" stroke="#2b7ea8" stroke-width="1"/></svg>
<svg style="left:630px;top:60px;" width="34" height="32" viewBox="0 0 34 32"><defs><linearGradient id="pg" x1="0" y1="0" x2="1" y2="1"><stop offset="0" stop-color="#e6e7e8"/><stop offset="1" stop-color="#c4c6c8"/></linearGradient></defs><path d="M1 9 H20 V1 H33 V30 H6 C10 27 11 22 8 19 C6 17 3 16 1 15 Z" fill="url(#pg)"/><rect x="22" y="1" width="9" height="6" fill="#dcddde" stroke="#c9cbcd"/><rect x="25" y="7" width="3" height="12" fill="#d2d4d6"/><circle cx="26.500" cy="21" r="3.600" fill="#b9bbbe"/></svg>
<svg style="left:691px;top:60.5px;" width="17" height="17" viewBox="0 0 17 17"><path d="M1 11 V3.500 C5 .5 11 .5 15 3.500 V11 C11 9 5 9 1 11 Z" fill="#c9effb" stroke="#7d8185" stroke-width=".9"/><path d="M0.5 15.5 H15.5" stroke="#7d8185" stroke-width="1"/><path d="M0.5 15.5 V13.3 M2.6 15.5 V14.1 M4.8 15.5 V14.1 M6.9 15.5 V13.3 M9.1 15.5 V14.1 M11.2 15.5 V14.1 M13.4 15.5 V13.3 M15.5 15.5 V14.1 " stroke="#7d8185" stroke-width=".8"/></svg>
<svg style="left:691px;top:87.5px;" width="17" height="17" viewBox="0 0 17 17"><path d="M3 1.500 H10" stroke="#b9bcbf" stroke-width=".9"/><rect x=".5" y="4" width="7.500" height="8" fill="#ececed" stroke="#d0d2d4" stroke-width=".6"/><path d="M9.500 1.500 L11.500 1.500 L15.500 9.500 L13 12 Z" fill="#c9d8e2" stroke="#9aa8b2" stroke-width=".7"/><path d="M8 12 V3.500 L13 12 Z" fill="#7fd0ee" stroke="#155f86" stroke-width="1.200"/><path d="M.5 12.500 H14" stroke="#7d8185" stroke-width=".8"/><path d="M0.5 15.5 H15.5" stroke="#7d8185" stroke-width="1"/><path d="M0.5 15.5 V13.3 M2.6 15.5 V14.1 M4.8 15.5 V14.1 M6.9 15.5 V13.3 M9.1 15.5 V14.1 M11.2 15.5 V14.1 M13.4 15.5 V13.3 M15.5 15.5 V14.1 " stroke="#7d8185" stroke-width=".8"/></svg>
<svg style="left:691px;top:113.5px;" width="17" height="17" viewBox="0 0 17 17"><path d="M1.500 13 V1.500 M0 3.500 L1.500 1 L3 3.500" stroke="#a9adb0" stroke-width="1" fill="none"/><path d="M4 6.500 L11.500 2 L15 8.500 L7.500 13 Z" fill="#e1e2e3" stroke="#c4c6c9"/><path d="M7.500 13 L15 8.500 V10.500 L7.500 15 Z" fill="#d0d2d4"/><path d="M0.5 15.5 H15.5" stroke="#c4c6c9" stroke-width="1"/><path d="M0.5 15.5 V13.3 M2.6 15.5 V14.1 M4.8 15.5 V14.1 M6.9 15.5 V13.3 M9.1 15.5 V14.1 M11.2 15.5 V14.1 M13.4 15.5 V13.3 M15.5 15.5 V14.1 " stroke="#c4c6c9" stroke-width=".8"/></svg>
<svg style="left:823px;top:60.5px;" width="17" height="17" viewBox="0 0 17 17"><path d="M3 1.500 H13 M8 0 V3 M6.500 .5 L9.500 2.500 M9.500 .5 L6.500 2.500" stroke="#222" stroke-width=".8"/><ellipse cx="4.500" cy="8" rx="4" ry="4.300" fill="#d9f1fa" stroke="#8e9296" stroke-width=".9"/><ellipse cx="11.500" cy="8" rx="4" ry="4.300" fill="#d9f1fa" stroke="#8e9296" stroke-width=".9"/><path d="M6 4.500 Q3.500 8 6 11.500 M10 4.500 Q12.500 8 10 11.500" fill="none" stroke="#8e9296" stroke-width=".9"/><path d="M0.5 15.5 H15.5" stroke="#7d8185" stroke-width="1"/><path d="M0.5 15.5 V13.3 M2.6 15.5 V14.1 M4.8 15.5 V14.1 M6.9 15.5 V13.3 M9.1 15.5 V14.1 M11.2 15.5 V14.1 M13.4 15.5 V13.3 M15.5 15.5 V14.1 " stroke="#7d8185" stroke-width=".8"/></svg>
<svg style="left:823px;top:87.5px;" width="17" height="17" viewBox="0 0 17 17"><path d="M.8 .5 V12.500 H16" stroke="#8e9296" stroke-width=".9" fill="none"/><path d="M1.500 5 C6 1.500 11 2 16 5 M1.500 9 C6 5.500 11 6 16 9 M1.500 12.500 C6 9.500 11 10 16 12.500 M6 0 C7 4 7 8 5.500 12.500 M11 0 C10.500 4 11 8 12 12.500" fill="none" stroke="#1d5f86" stroke-width="1.200"/><path d="M0.5 15.5 H15.5" stroke="#7d8185" stroke-width="1"/><path d="M0.5 15.5 V13.3 M2.6 15.5 V14.1 M4.8 15.5 V14.1 M6.9 15.5 V13.3 M9.1 15.5 V14.1 M11.2 15.5 V14.1 M13.4 15.5 V13.3 M15.5 15.5 V14.1 " stroke="#7d8185" stroke-width=".8"/></svg>
<svg style="left:823px;top:113.5px;" width="17" height="17" viewBox="0 0 17 17"><path d="M.5 .5 H9 L15.500 4.500 V12.500 L8 9.500 H.5 Z" fill="#bfe9f9"/><path d="M.5 .5 H9 L15.500 4.500 L7.500 4.500 Z" fill="#5cc0ea"/><path d="M2.500 2.500 L7.500 8 H12.500 L11 4.500" fill="none" stroke="#222" stroke-width="1.100"/><path d="M1.500 3.800 L2 1.800 L4 2.300 Z M12 7 L13.300 8.300 L11.500 9 Z" fill="#222"/><path d="M.5 9.800 H8 L15.500 12.800" fill="none" stroke="#e4e6e8" stroke-width="1"/><path d="M0.5 15.5 H15.5" stroke="#7d8185" stroke-width="1"/><path d="M0.5 15.5 V13.3 M2.6 15.5 V14.1 M4.8 15.5 V14.1 M6.9 15.5 V13.3 M9.1 15.5 V14.1 M11.2 15.5 V14.1 M13.4 15.5 V13.3 M15.5 15.5 V14.1 " stroke="#7d8185" stroke-width=".8"/></svg>
<svg style="left:944.5px;top:60.5px;" width="17" height="17" viewBox="0 0 17 17"><path d="M15.500 0 C15.500 3 13 4 10 4.500 M14 1.500 C13 4 11 5.500 8 6 M13 8 H8.500 M12 10 H9" stroke="#1d5f86" stroke-width="1" fill="none"/><path d="M10.500 4.500 C5 3.500 1 6 1.500 9.500 C2 12.500 8 12.500 13.500 11.500 M1.500 9 C5 8 7 7 9 5" fill="none" stroke="#70757a" stroke-width="1"/><path d="M0.5 15.5 H15.5" stroke="#7d8185" stroke-width="1"/><path d="M0.5 15.5 V13.3 M2.6 15.5 V14.1 M4.8 15.5 V14.1 M6.9 15.5 V13.3 M9.1 15.5 V14.1 M11.2 15.5 V14.1 M13.4 15.5 V13.3 M15.5 15.5 V14.1 " stroke="#7d8185" stroke-width=".8"/></svg>
<svg style="left:1058px;top:60px;" width="33" height="34" viewBox="0 0 33 34"><path d="M2 5.500 H30" stroke="#3a3d40" stroke-width="1.300"/><path d="M.5 5.500 L5 2.500 V8.500 Z M31.500 5.500 L27 2.500 V8.500 Z" fill="#3a3d40"/><path d="M.5 33 H31.500" stroke="#70757a" stroke-width="1"/><path d="M.8 33 V29 M3.400 33 V31 M6 33 V30 M8.600 33 V31 M11.200 33 V29.500 M13.800 33 V31 M16.400 33 V30 M19 33 V31 M21.600 33 V29.500 M24.200 33 V31 M26.800 33 V30 M29.400 33 V31 M31.300 33 V29" stroke="#70757a" stroke-width=".8"/></svg>
<span class="t" style="left:1058.4px;top:72.2px;font-size:14.5px;line-height:16px;color:#3a3d40;font-weight:700;letter-spacing:-0.465px;">−d1+</span>
<svg style="left:1113px;top:60.5px;" width="17" height="17" viewBox="0 0 17 17"><rect x=".5" y=".5" width="15" height="12" fill="#f4f4f5" stroke="#c4c6c9"/><rect x="3" y="3" width="10" height="9.500" fill="#e8e9ea" stroke="#c4c6c9"/><rect x="3" y="6" width="6.500" height="6.500" fill="#dcddde" stroke="#c4c6c9"/><path d="M0.5 15.5 H15.5" stroke="#c4c6c9" stroke-width="1"/><path d="M0.5 15.5 V13.3 M2.6 15.5 V14.1 M4.8 15.5 V14.1 M6.9 15.5 V13.3 M9.1 15.5 V14.1 M11.2 15.5 V14.1 M13.4 15.5 V13.3 M15.5 15.5 V14.1 " stroke="#c4c6c9" stroke-width=".8"/></svg>
<svg style="left:1113px;top:87.5px;" width="17" height="17" viewBox="0 0 17 17"><rect x=".5" y=".5" width="14" height="13" fill="#ececed" stroke="#c4c6c9"/><circle cx="7.500" cy="7" r="4.500" fill="none" stroke="#b4b6b9" stroke-width="1"/><circle cx="7.500" cy="7" r="2" fill="none" stroke="#b4b6b9" stroke-width="1"/><path d="M8 7.500 L15.500 15" stroke="#a9abae" stroke-width="1.300"/><path d="M7.500 7 L11.500 8.500 L9 11 Z" fill="#a9abae"/></svg>
<svg style="left:1113px;top:113.5px;" width="17" height="17" viewBox="0 0 17 17"><path d="M.8 0 V12.500 H16" stroke="#c4c6c9" stroke-width=".9" fill="none"/><path d="M1.500 12 C5 12 5.500 2 8 2 C10.500 2 11 12 15 12" fill="none" stroke="#b9bbbe" stroke-width="1"/><path d="M0.5 15.5 H15.5" stroke="#c4c6c9" stroke-width="1"/><path d="M0.5 15.5 V13.3 M2.6 15.5 V14.1 M4.8 15.5 V14.1 M6.9 15.5 V13.3 M9.1 15.5 V14.1 M11.2 15.5 V14.1 M13.4 15.5 V13.3 M15.5 15.5 V14.1 " stroke="#c4c6c9" stroke-width=".8"/></svg>
<svg style="left:1287px;top:60px;" width="35" height="34" viewBox="0 0 35 34"><path d="M12.500 15 L15.500 12 H33 V30 L30 33 H12.500 Z" fill="#d9dadb" stroke="#c4c6c9" stroke-width=".8"/><rect x="12.500" y="15" width="17.500" height="18" fill="#eeeeef" stroke="#c4c6c9" stroke-width=".8"/><path d="M18 1 V9 M24.500 1 V9 M31 1 V9 M1 18.300 H9 M1 24.300 H9 M1 30 H9" stroke="#b4b6b9" stroke-width="1"/><path d="M16.800 7.500 L18 10.500 L19.200 7.500 Z M23.300 7.500 L24.500 10.500 L25.700 7.500 Z M29.800 7.500 L31 10.500 L32.200 7.500 Z M7.500 17.100 L10.500 18.300 L7.500 19.500 Z M7.500 23.100 L10.500 24.300 L7.500 25.500 Z M7.500 28.800 L10.500 30 L7.500 31.200 Z" fill="#b4b6b9"/></svg>
<div style="left:558px;top:161px;width:49px;height:4px;background:#a69f3c;"></div>
<div style="left:0px;top:162px;width:242px;height:690px;background:#e7eded;"></div>
<div style="left:0px;top:162px;width:239px;height:690px;background:#fcfcfc;"></div>
<div style="left:234px;top:252px;width:5px;height:600px;background:#ffffff;"></div>
<div style="left:98px;top:162px;width:143px;height:30px;background:#e8eeee;"></div>
<div style="left:240.7px;top:162px;width:1.3px;height:690px;background:#f0f4f5;"></div>
<svg style="left:10px;top:166px;" width="14" height="21" viewBox="0 0 14 21"><rect x="1.5" y="1.5" width="4" height="4" fill="#fff" stroke="#333"/><rect x="1.5" y="8.500" width="4" height="4" fill="#fff" stroke="#333"/><rect x="1.5" y="15.500" width="4" height="4" fill="#fff" stroke="#333"/><rect x="9" y="8.500" width="4" height="4" fill="#fff" stroke="#333"/><path d="M3.500 5.500 V8.500 M3.500 12.500 V15.500 M5.500 10.500 H9" stroke="#333"/></svg>
<span class="t" style="left:31.4px;top:168.7px;font-size:12px;line-height:16px;color:#1f2a33;letter-spacing:-0.003px;">Model Tree</span>
<svg style="left:105.5px;top:168px;" width="20" height="20" viewBox="0 0 20 20"><path d="M0.5 2.5 Q0.5 0.5 2.5 0.5 H5 L6.5 2 H9.5 Q10.5 2 10.5 3.5 V8.5 H0.5 Z" fill="#fbe9c0" stroke="#c29a4e"/><path d="M3.5 6.5 Q3.5 4.5 5.5 4.5 H8 L9.5 6 H12.5 Q13.5 6 13.5 7.5 V12.5 H3.5 Z" fill="#fbe9c0" stroke="#c29a4e"/><path d="M6.5 10.5 Q6.5 8.5 8.5 8.5 H11 L12.5 10 H17.5 Q18.5 10 18.5 11.5 V18.5 H6.5 Z" fill="#fbe9c0" stroke="#c29a4e"/></svg>
<span class="t" style="left:129.1px;top:168.7px;font-size:12px;line-height:16px;color:#1f2a33;letter-spacing:-0.183px;width:36px;overflow:hidden;-webkit-mask-image:linear-gradient(90deg,#000 55%,transparent 100%);">Folder</span>
<svg style="left:177px;top:169px;" width="18" height="16" viewBox="0 0 18 16"><path d="M0.5 2.5 Q0.5 0.5 2.5 0.5 H5 L6.5 2 H15.5 Q16.5 2 16.5 3.5 V14.5 H0.5 Z" fill="#fbe9c0" stroke="#c29a4e"/><path d="M9 6.500 V13.500 M5.500 10 H12.500 M6.500 7.500 L11.500 12.500 M11.500 7.500 L6.500 12.500" stroke="#1b6f9a" stroke-width="1"/></svg>
<span class="t" style="left:200.2px;top:168.7px;font-size:12px;line-height:16px;color:#1f2a33;letter-spacing:-0.067px;width:31px;overflow:hidden;-webkit-mask-image:linear-gradient(90deg,#000 55%,transparent 100%);">Favori</span>
<span class="t" style="left:28.1px;top:197.8px;font-size:12px;line-height:16px;color:#1f2a33;font-weight:700;letter-spacing:0.061px;">Model Tree</span>
<svg style="left:121px;top:195px;" width="20" height="22" viewBox="0 0 20 22"><path d="M2 4.500 C4 2 9 1.500 12 3.500 L12 7 C10 5.500 8 5.500 7.500 6.500 H4 Z" fill="#7a7d80" stroke="#4a4d50" stroke-width=".8"/><rect x="5" y="6.500" width="3.200" height="14" rx="1" fill="#d9b56a" stroke="#8a6a2a" stroke-width=".8"/><rect x="14.500" y="2" width="1.300" height="10" fill="#5a5d60"/><rect x="13.500" y="11.500" width="3.200" height="9" rx="1" fill="#d9b56a" stroke="#8a6a2a" stroke-width=".8"/></svg>
<svg style="left:147.5px;top:203.5px;" width="8" height="4" viewBox="0 0 8 4"><path d="M0 0 H8 L4.0 4 Z" fill="#555"/></svg>
<svg style="left:165px;top:196px;" width="17" height="21" viewBox="0 0 17 21"><path d="M1.500 .5 H11 L15.500 5 V19.500 H1.500 Z" fill="#f4f8fa" stroke="#8a9094"/><path d="M11 .5 V5 H15.500" fill="#dfe6ea" stroke="#8a9094"/><circle cx="4.500" cy="8" r="1" fill="none" stroke="#555" stroke-width=".8"/><circle cx="4.500" cy="12" r="1" fill="none" stroke="#555" stroke-width=".8"/><circle cx="4.500" cy="16" r="1" fill="none" stroke="#555" stroke-width=".8"/><path d="M7 8 H13 M7 12 H13 M7 16 H13" stroke="#555" stroke-width=".9"/></svg>
<svg style="left:189.5px;top:203.5px;" width="8" height="4" viewBox="0 0 8 4"><path d="M0 0 H8 L4.0 4 Z" fill="#555"/></svg>
<svg style="left:209px;top:195px;" width="23" height="22" viewBox="0 0 23 22"><rect x="1.500" y="1.500" width="3.500" height="3.500" fill="#fff" stroke="#8a8d90" stroke-width=".9"/><rect x="1.500" y="8.500" width="3.500" height="3.500" fill="#fff" stroke="#8a8d90" stroke-width=".9"/><rect x="1.500" y="15.500" width="3.500" height="3.500" fill="#fff" stroke="#8a8d90" stroke-width=".9"/><path d="M8.500 2 V20 M13 2 V9 M17.500 2 V9 M8.500 2.500 H19" stroke="#b0b3b6" stroke-width=".9" fill="none"/><rect x="9.500" y="8.500" width="3.500" height="3.500" fill="#fff" stroke="#8a8d90" stroke-width=".9"/><path d="M10.500 15 C13 11.500 18 11.500 20.500 15 C18 18.500 13 18.500 10.500 15 Z" fill="#fff" stroke="#222" stroke-width="1.100"/><circle cx="15.500" cy="15" r="1.800" fill="#222"/><path d="M11.500 10.500 L21.500 20" stroke="#222" stroke-width="1.400"/></svg>
<svg style="left:12px;top:225.5px;" width="16" height="15" viewBox="0 0 16 15"><path d="M1 1.500 H15 L9.300 7.500 V13.500 H6.700 V7.500 Z" fill="#fff" stroke="#555" stroke-width="1.100"/></svg>
<div style="left:32.5px;top:220.5px;width:158.5px;height:26.5px;background:#fff;border:1px solid #a9b7ba;"></div>
<svg style="left:177px;top:229px;" width="9" height="9" viewBox="0 0 9 9"><path d="M1 1 L8 8 M8 1 L1 8" stroke="#8a8d90" stroke-width="1.100"/></svg>
<svg style="left:196.5px;top:231px;" width="8" height="4" viewBox="0 0 8 4"><path d="M0 0 H8 L4.0 4 Z" fill="#555"/></svg>
<svg style="left:216px;top:227px;" width="12" height="12" viewBox="0 0 12 12"><path d="M6 .5 V11.500 M.5 6 H11.500" stroke="#9a9da0" stroke-width="3"/></svg>
<div style="left:8px;top:252px;width:226px;height:21px;background:#f2f4f5;border-bottom:1px solid #c6cacc;"></div>
<div style="left:172px;top:252px;width:1px;height:600px;background:#e4e7e9;"></div>
<div style="left:172px;top:252px;width:1px;height:21px;background:#c6cacc;"></div>
<span class="t" style="left:177.7px;top:255.9px;font-size:12px;line-height:16px;color:#1f2a33;letter-spacing:-0.222px;">Feat #</span>
<div style="left:219.5px;top:595px;width:14.5px;height:260px;background:#f9f9f9;border:1px solid #bfc1c4;"></div>
<div style="left:219.5px;top:286.5px;width:14.5px;height:308.5px;background:#dfe1e3;"></div>
<div style="left:219.5px;top:273px;width:14.5px;height:13.5px;background:#fdfdfd;border:1px solid #d9dcde;"></div>
<svg style="left:222.5px;top:277px;" width="9" height="5" viewBox="0 0 9 5"><path d="M0 5 L4.500 0 L9 5 Z" fill="#a7aaad"/></svg>
<svg style="left:37px;top:283.2px;" width="7" height="10" viewBox="0 0 7 10"><path d="M.5 .5 L6.500 5 L.5 9.500 Z" fill="#7b7e81"/></svg>
<svg style="left:51.5px;top:280.2px;" width="16" height="16" viewBox="0 0 16 16"><path d="M1.500 6.500 L6.500 1.500 H15 V9.500 L10 14.500 H1.500 Z" fill="#a8def2" stroke="#6a7a84" stroke-width=".8"/><path d="M10 6.500 L15 1.500 V9.500 L10 14.500 Z" fill="#5bb8de"/><rect x="1.500" y="6.500" width="8.500" height="8" fill="#fafbfc" stroke="#6a7a84" stroke-width=".8"/></svg>
<span class="t" style="left:72.3px;top:280.2px;font-size:12px;line-height:16px;color:#1f2a33;letter-spacing:-0.373px;">Extrude 3 [11]</span>
<span class="t" style="left:186.0px;top:280.2px;font-size:12px;line-height:16px;color:#1f2a33;letter-spacing:-0.430px;">32</span>
<svg style="left:17px;top:301.2px;" width="7" height="10" viewBox="0 0 7 10"><path d="M.5 .5 L6.500 5 L.5 9.500 Z" fill="#7b7e81"/></svg>
<svg style="left:31.5px;top:298.2px;" width="16" height="16" viewBox="0 0 16 16"><rect x=".5" y=".5" width="15" height="15" rx="1.500" fill="#f4f0fa" stroke="#8d78b8"/><rect x="3.800" y="3.800" width="2.800" height="2.800" fill="#2a3f8c"/><rect x="9.400" y="3.800" width="2.800" height="2.800" fill="#2a3f8c"/><rect x="3.800" y="9.400" width="2.800" height="2.800" fill="#2a3f8c"/><rect x="9.400" y="9.400" width="2.800" height="2.800" fill="#2a3f8c"/><path d="M3.800 7 H6.600 M9.400 7 H12.200 M3.800 12.600 H6.600 M9.400 12.600 H12.200" stroke="#9a5fc0" stroke-width=".8"/></svg>
<span class="t" style="left:52.0px;top:298.2px;font-size:12px;line-height:16px;color:#1f2a33;letter-spacing:-0.177px;">Pattern 8 of Round 6</span>
<span class="t" style="left:186.0px;top:298.2px;font-size:12px;line-height:16px;color:#1f2a33;letter-spacing:-0.430px;">33</span>
<svg style="left:17px;top:319.2px;" width="7" height="10" viewBox="0 0 7 10"><path d="M.5 .5 L6.500 5 L.5 9.500 Z" fill="#7b7e81"/></svg>
<svg style="left:31.5px;top:316.2px;" width="16" height="16" viewBox="0 0 16 16"><rect x=".5" y="1.500" width="9.500" height="4.500" fill="#fdf5dc" stroke="#6a6d70" stroke-width=".9"/><path d="M10 3.800 H14.500 L10.500 13" fill="none" stroke="#333" stroke-width="1.100"/><path d="M8.300 11 L10 15 L12.600 11.800 Z" fill="#222"/></svg>
<span class="t" style="left:52.0px;top:316.2px;font-size:12px;line-height:16px;color:#1f2a33;transform:scaleX(0.8697);transform-origin:0 0;">MKR2</span>
<span class="t" style="left:186.0px;top:316.2px;font-size:12px;line-height:16px;color:#1f2a33;letter-spacing:-0.430px;">45</span>
<svg style="left:17px;top:337.2px;" width="7" height="10" viewBox="0 0 7 10"><path d="M.5 .5 L6.500 5 L.5 9.500 Z" fill="#7b7e81"/></svg>
<svg style="left:31.5px;top:334.2px;" width="16" height="16" viewBox="0 0 16 16"><rect x=".5" y="1.500" width="9.500" height="4.500" fill="#fdf5dc" stroke="#6a6d70" stroke-width=".9"/><path d="M10 3.800 H14.500 L10.500 13" fill="none" stroke="#333" stroke-width="1.100"/><path d="M8.300 11 L10 15 L12.600 11.800 Z" fill="#222"/></svg>
<span class="t" style="left:52.0px;top:334.2px;font-size:12px;line-height:16px;color:#1f2a33;transform:scaleX(0.8697);transform-origin:0 0;">MKR3</span>
<span class="t" style="left:186.0px;top:334.2px;font-size:12px;line-height:16px;color:#1f2a33;letter-spacing:-0.430px;">46</span>
<svg style="left:17px;top:355.2px;" width="7" height="10" viewBox="0 0 7 10"><path d="M.5 .5 L6.500 5 L.5 9.500 Z" fill="#7b7e81"/></svg>
<svg style="left:31.5px;top:352.2px;" width="16" height="16" viewBox="0 0 16 16"><rect x=".5" y="1.500" width="9.500" height="4.500" fill="#fdf5dc" stroke="#6a6d70" stroke-width=".9"/><path d="M10 3.800 H14.500 L10.500 13" fill="none" stroke="#333" stroke-width="1.100"/><path d="M8.300 11 L10 15 L12.600 11.800 Z" fill="#222"/></svg>
<span class="t" style="left:52.0px;top:352.2px;font-size:12px;line-height:16px;color:#1f2a33;transform:scaleX(0.8697);transform-origin:0 0;">MKR4</span>
<span class="t" style="left:186.0px;top:352.2px;font-size:12px;line-height:16px;color:#1f2a33;letter-spacing:-0.430px;">47</span>
<svg style="left:17px;top:373.2px;" width="7" height="10" viewBox="0 0 7 10"><path d="M.5 .5 L6.500 5 L.5 9.500 Z" fill="#7b7e81"/></svg>
<svg style="left:31.5px;top:370.2px;" width="16" height="16" viewBox="0 0 16 16"><rect x=".5" y="1.500" width="9.500" height="4.500" fill="#fdf5dc" stroke="#6a6d70" stroke-width=".9"/><path d="M10 3.800 H14.500 L10.500 13" fill="none" stroke="#333" stroke-width="1.100"/><path d="M8.300 11 L10 15 L12.600 11.800 Z" fill="#222"/></svg>
<span class="t" style="left:52.0px;top:370.2px;font-size:12px;line-height:16px;color:#1f2a33;transform:scaleX(0.8697);transform-origin:0 0;">MKR5</span>
<span class="t" style="left:186.0px;top:370.2px;font-size:12px;line-height:16px;color:#1f2a33;letter-spacing:-0.430px;">48</span>
<svg style="left:17px;top:391.2px;" width="7" height="10" viewBox="0 0 7 10"><path d="M.5 .5 L6.500 5 L.5 9.500 Z" fill="#7b7e81"/></svg>
<svg style="left:31.5px;top:388.2px;" width="16" height="16" viewBox="0 0 16 16"><rect x=".5" y=".5" width="15" height="15" rx="1.500" fill="#f4f0fa" stroke="#8d78b8"/><rect x="3.800" y="3.800" width="2.800" height="2.800" fill="#2a3f8c"/><rect x="9.400" y="3.800" width="2.800" height="2.800" fill="#2a3f8c"/><rect x="3.800" y="9.400" width="2.800" height="2.800" fill="#2a3f8c"/><rect x="9.400" y="9.400" width="2.800" height="2.800" fill="#2a3f8c"/><path d="M3.800 7 H6.600 M9.400 7 H12.200 M3.800 12.600 H6.600 M9.400 12.600 H12.200" stroke="#9a5fc0" stroke-width=".8"/></svg>
<span class="t" style="left:52.0px;top:388.2px;font-size:12px;line-height:16px;color:#1f2a33;letter-spacing:-0.217px;">Pattern 2 of Round 1</span>
<span class="t" style="left:186.0px;top:388.2px;font-size:12px;line-height:16px;color:#1f2a33;letter-spacing:-0.430px;">49</span>
<svg style="left:31.5px;top:406.2px;" width="16" height="16" viewBox="0 0 16 16"><path d="M1 3 H7 C11 3 13 6 13.500 10 V15 H1 Z" fill="#e4e6e8"/><path d="M4 1 H8 C13 2 15.500 6 15.500 11 L13 14.500 C13 8 10 4 4 3.500 Z" fill="#7ccbee" stroke="#2b8cbc" stroke-width=".8"/><path d="M1 15 H13" stroke="#cfd2d4"/></svg>
<span class="t" style="left:52.0px;top:406.2px;font-size:12px;line-height:16px;color:#1f2a33;letter-spacing:-0.168px;">Round 2</span>
<span class="t" style="left:186.0px;top:406.2px;font-size:12px;line-height:16px;color:#1f2a33;letter-spacing:-0.430px;">53</span>
<svg style="left:17px;top:427.2px;" width="7" height="10" viewBox="0 0 7 10"><path d="M.5 .5 L6.500 5 L.5 9.500 Z" fill="#7b7e81"/></svg>
<svg style="left:31.5px;top:424.2px;" width="16" height="16" viewBox="0 0 16 16"><rect x=".5" y="1.500" width="9.500" height="4.500" fill="#fdf5dc" stroke="#6a6d70" stroke-width=".9"/><path d="M10 3.800 H14.500 L10.500 13" fill="none" stroke="#333" stroke-width="1.100"/><path d="M8.300 11 L10 15 L12.600 11.800 Z" fill="#222"/></svg>
<span class="t" style="left:52.0px;top:424.2px;font-size:12px;line-height:16px;color:#1f2a33;transform:scaleX(0.8032);transform-origin:0 0;">JET_RING</span>
<span class="t" style="left:186.0px;top:424.2px;font-size:12px;line-height:16px;color:#1f2a33;letter-spacing:-0.430px;">54</span>
<svg style="left:17px;top:445.2px;" width="7" height="10" viewBox="0 0 7 10"><path d="M.5 .5 L6.500 5 L.5 9.500 Z" fill="#7b7e81"/></svg>
<svg style="left:31.5px;top:442.2px;" width="16" height="16" viewBox="0 0 16 16"><path d="M1.500 6.500 L6.500 1.500 H15 V9.500 L10 14.500 H1.500 Z" fill="#a9a48f" stroke="#b9b7ab" stroke-width=".8"/><rect x="1.500" y="6.500" width="8.500" height="8" fill="#f7f7f5" stroke="#c9c8c0" stroke-width=".8"/></svg>
<span class="t" style="left:52.0px;top:442.2px;font-size:12px;line-height:16px;color:#a9adb0;transform:scaleX(0.8008);transform-origin:0 0;">JR_BASE_DIA</span>
<span class="t" style="left:186.0px;top:442.2px;font-size:12px;line-height:16px;color:#a9adb0;letter-spacing:-0.430px;">55</span>
<svg style="left:31.5px;top:460.2px;" width="16" height="16" viewBox="0 0 16 16"><path d="M2 11 C3 2.500 13 2.500 14 11" fill="none" stroke="#1f86bd" stroke-width="1.800"/><path d="M1 14.500 H15 M1 1.500 H15" stroke="#444" stroke-width="1" stroke-dasharray="1.200 1.700"/><path d="M2 9 V12 M14 9 V12" stroke="#444" stroke-width=".9"/></svg>
<span class="t" style="left:52.0px;top:460.2px;font-size:12px;line-height:16px;color:#1f2a33;letter-spacing:-0.413px;">Sketch 1</span>
<span class="t" style="left:186.0px;top:460.2px;font-size:12px;line-height:16px;color:#1f2a33;letter-spacing:-0.430px;">56</span>
<svg style="left:17px;top:481.2px;" width="7" height="10" viewBox="0 0 7 10"><path d="M.5 .5 L6.500 5 L.5 9.500 Z" fill="#7b7e81"/></svg>
<svg style="left:31.5px;top:478.2px;" width="16" height="16" viewBox="0 0 16 16"><rect x=".5" y=".5" width="15" height="15" rx="1.500" fill="#f4f0fa" stroke="#8d78b8"/><rect x="3.800" y="3.800" width="2.800" height="2.800" fill="#2a3f8c"/><rect x="9.400" y="3.800" width="2.800" height="2.800" fill="#2a3f8c"/><rect x="3.800" y="9.400" width="2.800" height="2.800" fill="#2a3f8c"/><rect x="9.400" y="9.400" width="2.800" height="2.800" fill="#2a3f8c"/><path d="M3.800 7 H6.600 M9.400 7 H12.200 M3.800 12.600 H6.600 M9.400 12.600 H12.200" stroke="#9a5fc0" stroke-width=".8"/></svg>
<span class="t" style="left:52.0px;top:478.2px;font-size:12px;line-height:16px;color:#1f2a33;letter-spacing:-0.344px;">Pattern 6 of Sweep 1</span>
<span class="t" style="left:186.0px;top:478.2px;font-size:12px;line-height:16px;color:#1f2a33;letter-spacing:-0.430px;">57</span>
<svg style="left:17px;top:499.2px;" width="7" height="10" viewBox="0 0 7 10"><path d="M.5 .5 L6.500 5 L.5 9.500 Z" fill="#7b7e81"/></svg>
<svg style="left:31.5px;top:496.2px;" width="16" height="16" viewBox="0 0 16 16"><path d="M7 0 V16" stroke="#555" stroke-width=".9" stroke-dasharray="2 1.200"/><circle cx="3.500" cy="8.500" r="2.300" fill="#fff" stroke="#6a6d70" stroke-width="1"/><circle cx="11" cy="8.500" r="3" fill="#e6f5fc" stroke="#2b8cbc" stroke-width="1.800"/></svg>
<span class="t" style="left:52.0px;top:496.2px;font-size:12px;line-height:16px;color:#1f2a33;transform:scaleX(0.8032);transform-origin:0 0;">JR_PLUG</span>
<span class="t" style="left:186.0px;top:496.2px;font-size:12px;line-height:16px;color:#1f2a33;letter-spacing:-0.430px;">64</span>
<svg style="left:17px;top:517.2px;" width="7" height="10" viewBox="0 0 7 10"><path d="M.5 .5 L6.500 5 L.5 9.500 Z" fill="#7b7e81"/></svg>
<svg style="left:31.5px;top:514.2px;" width="16" height="16" viewBox="0 0 16 16"><path d="M1.500 6.500 L6.500 1.500 H15 V9.500 L10 14.500 H1.500 Z" fill="#a8def2" stroke="#6a7a84" stroke-width=".8"/><path d="M10 6.500 L15 1.500 V9.500 L10 14.500 Z" fill="#5bb8de"/><rect x="1.500" y="6.500" width="8.500" height="8" fill="#fafbfc" stroke="#6a7a84" stroke-width=".8"/></svg>
<span class="t" style="left:52.0px;top:514.2px;font-size:12px;line-height:16px;color:#1f2a33;letter-spacing:-0.342px;">Extrude 4</span>
<span class="t" style="left:186.0px;top:514.2px;font-size:12px;line-height:16px;color:#1f2a33;letter-spacing:-0.430px;">65</span>
<svg style="left:17px;top:535.2px;" width="7" height="10" viewBox="0 0 7 10"><path d="M.5 .5 L6.500 5 L.5 9.500 Z" fill="#7b7e81"/></svg>
<svg style="left:31.5px;top:532.2px;" width="16" height="16" viewBox="0 0 16 16"><path d="M7 0 V16" stroke="#555" stroke-width=".9" stroke-dasharray="2 1.200"/><circle cx="3.500" cy="8.500" r="2.300" fill="#fff" stroke="#6a6d70" stroke-width="1"/><circle cx="11" cy="8.500" r="3" fill="#e6f5fc" stroke="#2b8cbc" stroke-width="1.800"/></svg>
<span class="t" style="left:52.0px;top:532.2px;font-size:12px;line-height:16px;color:#1f2a33;transform:scaleX(0.8899);transform-origin:0 0;">Revolve 3</span>
<span class="t" style="left:186.0px;top:532.2px;font-size:12px;line-height:16px;color:#1f2a33;letter-spacing:-0.430px;">66</span>
<svg style="left:17px;top:553.2px;" width="7" height="10" viewBox="0 0 7 10"><path d="M.5 .5 L6.500 5 L.5 9.500 Z" fill="#7b7e81"/></svg>
<svg style="left:31.5px;top:550.2px;" width="16" height="16" viewBox="0 0 16 16"><rect x=".5" y=".5" width="15" height="15" rx="1.500" fill="#f4f0fa" stroke="#8d78b8"/><rect x="3.800" y="3.800" width="2.800" height="2.800" fill="#2a3f8c"/><rect x="9.400" y="3.800" width="2.800" height="2.800" fill="#2a3f8c"/><rect x="3.800" y="9.400" width="2.800" height="2.800" fill="#2a3f8c"/><rect x="9.400" y="9.400" width="2.800" height="2.800" fill="#2a3f8c"/><path d="M3.800 7 H6.600 M9.400 7 H12.200 M3.800 12.600 H6.600 M9.400 12.600 H12.200" stroke="#9a5fc0" stroke-width=".8"/></svg>
<span class="t" style="left:52.0px;top:550.2px;font-size:12px;line-height:16px;color:#1f2a33;letter-spacing:-0.203px;">Pattern 7 of Solidify 1</span>
<span class="t" style="left:186.0px;top:550.2px;font-size:12px;line-height:16px;color:#1f2a33;letter-spacing:-0.430px;">67</span>
<svg style="left:17px;top:571.2px;" width="7" height="10" viewBox="0 0 7 10"><path d="M.5 .5 L6.500 5 L.5 9.500 Z" fill="#7b7e81"/></svg>
<svg style="left:31.5px;top:568.2px;" width="16" height="16" viewBox="0 0 16 16"><path d="M7 0 V16" stroke="#555" stroke-width=".9" stroke-dasharray="2 1.200"/><circle cx="3.500" cy="8.500" r="2.300" fill="#fff" stroke="#6a6d70" stroke-width="1"/><circle cx="11" cy="8.500" r="3" fill="#e6f5fc" stroke="#2b8cbc" stroke-width="1.800"/></svg>
<span class="t" style="left:52.0px;top:568.2px;font-size:12px;line-height:16px;color:#1f2a33;transform:scaleX(0.8974);transform-origin:0 0;">Revolve 4</span>
<span class="t" style="left:186.0px;top:568.2px;font-size:12px;line-height:16px;color:#1f2a33;letter-spacing:-0.430px;">74</span>
<svg style="left:17px;top:589.2px;" width="7" height="10" viewBox="0 0 7 10"><path d="M.5 .5 L6.500 5 L.5 9.500 Z" fill="#7b7e81"/></svg>
<svg style="left:31.5px;top:586.2px;" width="16" height="16" viewBox="0 0 16 16"><rect x=".5" y=".5" width="15" height="15" rx="1.500" fill="#f4f0fa" stroke="#8d78b8"/><rect x="3.800" y="3.800" width="2.800" height="2.800" fill="#2a3f8c"/><rect x="9.400" y="3.800" width="2.800" height="2.800" fill="#2a3f8c"/><rect x="3.800" y="9.400" width="2.800" height="2.800" fill="#2a3f8c"/><rect x="9.400" y="9.400" width="2.800" height="2.800" fill="#2a3f8c"/><path d="M3.800 7 H6.600 M9.400 7 H12.200 M3.800 12.600 H6.600 M9.400 12.600 H12.200" stroke="#9a5fc0" stroke-width=".8"/></svg>
<span class="t" style="left:52.0px;top:586.2px;font-size:12px;line-height:16px;color:#1f2a33;letter-spacing:-0.257px;">Pattern 4 of Extrude 5</span>
<span class="t" style="left:186.0px;top:586.2px;font-size:12px;line-height:16px;color:#1f2a33;letter-spacing:-0.430px;">75</span>
<svg style="left:17px;top:607.2px;" width="7" height="10" viewBox="0 0 7 10"><path d="M.5 .5 L6.500 5 L.5 9.500 Z" fill="#7b7e81"/></svg>
<svg style="left:31.5px;top:604.2px;" width="16" height="16" viewBox="0 0 16 16"><rect x=".5" y=".5" width="15" height="15" rx="1.500" fill="#f4f0fa" stroke="#8d78b8"/><rect x="3.800" y="3.800" width="2.800" height="2.800" fill="#2a3f8c"/><rect x="9.400" y="3.800" width="2.800" height="2.800" fill="#2a3f8c"/><rect x="3.800" y="9.400" width="2.800" height="2.800" fill="#2a3f8c"/><rect x="9.400" y="9.400" width="2.800" height="2.800" fill="#2a3f8c"/><path d="M3.800 7 H6.600 M9.400 7 H12.200 M3.800 12.600 H6.600 M9.400 12.600 H12.200" stroke="#9a5fc0" stroke-width=".8"/></svg>
<span class="t" style="left:52.0px;top:604.2px;font-size:12px;line-height:16px;color:#1f2a33;letter-spacing:-0.167px;">Pattern 5 of Round 4</span>
<span class="t" style="left:186.0px;top:604.2px;font-size:12px;line-height:16px;color:#1f2a33;letter-spacing:-0.430px;">82</span>
<svg style="left:31.5px;top:622.2px;" width="16" height="16" viewBox="0 0 16 16"><path d="M1 3.500 H7 L13 10 V15 H1 Z" fill="#e4e6e8"/><path d="M4 1.500 H9 L15.500 8 L13.500 12 L6.500 3.500 Z" fill="#bfe6f7" stroke="#2b8cbc" stroke-width=".8"/></svg>
<span class="t" style="left:52.0px;top:622.2px;font-size:12px;line-height:16px;color:#1f2a33;letter-spacing:-0.492px;">Chamfer 1</span>
<span class="t" style="left:186.0px;top:622.2px;font-size:12px;line-height:16px;color:#1f2a33;letter-spacing:-0.430px;">89</span>
<svg style="left:31.5px;top:640.2px;" width="16" height="16" viewBox="0 0 16 16"><path d="M1 3 H7 C11 3 13 6 13.500 10 V15 H1 Z" fill="#e4e6e8"/><path d="M4 1 H8 C13 2 15.500 6 15.500 11 L13 14.500 C13 8 10 4 4 3.500 Z" fill="#7ccbee" stroke="#2b8cbc" stroke-width=".8"/><path d="M1 15 H13" stroke="#cfd2d4"/></svg>
<span class="t" style="left:52.0px;top:640.2px;font-size:12px;line-height:16px;color:#1f2a33;letter-spacing:-0.168px;">Round 3</span>
<span class="t" style="left:186.0px;top:640.2px;font-size:12px;line-height:16px;color:#1f2a33;letter-spacing:-0.430px;">90</span>
<svg style="left:17px;top:661.2px;" width="7" height="10" viewBox="0 0 7 10"><path d="M.5 .5 L6.500 5 L.5 9.500 Z" fill="#7b7e81"/></svg>
<svg style="left:31.5px;top:658.2px;" width="16" height="16" viewBox="0 0 16 16"><rect x=".5" y="1.500" width="9.500" height="4.500" fill="#fdf5dc" stroke="#6a6d70" stroke-width=".9"/><path d="M10 3.800 H14.500 L10.500 13" fill="none" stroke="#333" stroke-width="1.100"/><path d="M8.300 11 L10 15 L12.600 11.800 Z" fill="#222"/></svg>
<span class="t" style="left:52.0px;top:658.2px;font-size:12px;line-height:16px;color:#1f2a33;transform:scaleX(0.8667);transform-origin:0 0;">MKR7</span>
<span class="t" style="left:186.0px;top:658.2px;font-size:12px;line-height:16px;color:#1f2a33;letter-spacing:-0.430px;">91</span>
<svg style="left:17px;top:679.2px;" width="7" height="10" viewBox="0 0 7 10"><path d="M.5 .5 L6.500 5 L.5 9.500 Z" fill="#7b7e81"/></svg>
<svg style="left:31.5px;top:676.2px;" width="16" height="16" viewBox="0 0 16 16"><path d="M1.500 6.500 L6.500 1.500 H15 V9.500 L10 14.500 H1.500 Z" fill="#a8def2" stroke="#6a7a84" stroke-width=".8"/><path d="M10 6.500 L15 1.500 V9.500 L10 14.500 Z" fill="#5bb8de"/><rect x="1.500" y="6.500" width="8.500" height="8" fill="#fafbfc" stroke="#6a7a84" stroke-width=".8"/></svg>
<span class="t" style="left:52.0px;top:676.2px;font-size:12px;line-height:16px;color:#1f2a33;letter-spacing:-0.342px;">Extrude 6</span>
<span class="t" style="left:186.0px;top:676.2px;font-size:12px;line-height:16px;color:#1f2a33;letter-spacing:-0.430px;">92</span>
<svg style="left:31.5px;top:694.2px;" width="16" height="16" viewBox="0 0 16 16"><path d="M1 3 H7 C11 3 13 6 13.500 10 V15 H1 Z" fill="#e4e6e8"/><path d="M4 1 H8 C13 2 15.500 6 15.500 11 L13 14.500 C13 8 10 4 4 3.500 Z" fill="#7ccbee" stroke="#2b8cbc" stroke-width=".8"/><path d="M1 15 H13" stroke="#cfd2d4"/></svg>
<span class="t" style="left:52.0px;top:694.2px;font-size:12px;line-height:16px;color:#1f2a33;letter-spacing:-0.168px;">Round 7</span>
<span class="t" style="left:186.0px;top:694.2px;font-size:12px;line-height:16px;color:#1f2a33;letter-spacing:-0.430px;">93</span>
<svg style="left:31.5px;top:712.2px;" width="16" height="16" viewBox="0 0 16 16"><path d="M1 3 H7 C11 3 13 6 13.500 10 V15 H1 Z" fill="#e4e6e8"/><path d="M4 1 H8 C13 2 15.500 6 15.500 11 L13 14.500 C13 8 10 4 4 3.500 Z" fill="#7ccbee" stroke="#2b8cbc" stroke-width=".8"/><path d="M1 15 H13" stroke="#cfd2d4"/></svg>
<span class="t" style="left:52.0px;top:712.2px;font-size:12px;line-height:16px;color:#1f2a33;letter-spacing:-0.168px;">Round 8</span>
<span class="t" style="left:186.0px;top:712.2px;font-size:12px;line-height:16px;color:#1f2a33;letter-spacing:-0.430px;">94</span>
<svg style="left:17px;top:733.2px;" width="7" height="10" viewBox="0 0 7 10"><path d="M.5 .5 L6.500 5 L.5 9.500 Z" fill="#7b7e81"/></svg>
<svg style="left:31.5px;top:730.2px;" width="16" height="16" viewBox="0 0 16 16"><rect x=".5" y="1.500" width="9.500" height="4.500" fill="#fdf5dc" stroke="#6a6d70" stroke-width=".9"/><path d="M10 3.800 H14.500 L10.500 13" fill="none" stroke="#333" stroke-width="1.100"/><path d="M8.300 11 L10 15 L12.600 11.800 Z" fill="#222"/></svg>
<span class="t" style="left:52.0px;top:730.2px;font-size:12px;line-height:16px;color:#1f2a33;transform:scaleX(0.8667);transform-origin:0 0;">MKR8</span>
<span class="t" style="left:186.0px;top:730.2px;font-size:12px;line-height:16px;color:#1f2a33;letter-spacing:-0.430px;">95</span>
<svg style="left:17px;top:751.2px;" width="7" height="10" viewBox="0 0 7 10"><path d="M.5 .5 L6.500 5 L.5 9.500 Z" fill="#7b7e81"/></svg>
<svg style="left:31.5px;top:748.2px;" width="16" height="16" viewBox="0 0 16 16"><rect x=".5" y="1.500" width="9.500" height="4.500" fill="#fdf5dc" stroke="#6a6d70" stroke-width=".9"/><path d="M10 3.800 H14.500 L10.500 13" fill="none" stroke="#333" stroke-width="1.100"/><path d="M8.300 11 L10 15 L12.600 11.800 Z" fill="#222"/></svg>
<span class="t" style="left:52.0px;top:748.2px;font-size:12px;line-height:16px;color:#1f2a33;transform:scaleX(0.8667);transform-origin:0 0;">MKR9</span>
<span class="t" style="left:186.0px;top:748.2px;font-size:12px;line-height:16px;color:#1f2a33;letter-spacing:-0.430px;">96</span>
<svg style="left:17px;top:769.2px;" width="7" height="10" viewBox="0 0 7 10"><path d="M.5 .5 L6.500 5 L.5 9.500 Z" fill="#7b7e81"/></svg>
<svg style="left:31.5px;top:766.2px;" width="16" height="16" viewBox="0 0 16 16"><rect x=".5" y="1.500" width="9.500" height="4.500" fill="#fdf5dc" stroke="#6a6d70" stroke-width=".9"/><path d="M10 3.800 H14.500 L10.500 13" fill="none" stroke="#333" stroke-width="1.100"/><path d="M8.300 11 L10 15 L12.600 11.800 Z" fill="#222"/></svg>
<span class="t" style="left:52.0px;top:766.2px;font-size:12px;line-height:16px;color:#1f2a33;transform:scaleX(0.8772);transform-origin:0 0;">MKR10</span>
<span class="t" style="left:186.0px;top:766.2px;font-size:12px;line-height:16px;color:#1f2a33;letter-spacing:-0.430px;">97</span>
<svg style="left:17px;top:787.2px;" width="7" height="10" viewBox="0 0 7 10"><path d="M.5 .5 L6.500 5 L.5 9.500 Z" fill="#7b7e81"/></svg>
<svg style="left:31.5px;top:784.2px;" width="16" height="16" viewBox="0 0 16 16"><rect x=".5" y="1.500" width="9.500" height="4.500" fill="#fdf5dc" stroke="#6a6d70" stroke-width=".9"/><path d="M10 3.800 H14.500 L10.500 13" fill="none" stroke="#333" stroke-width="1.100"/><path d="M8.300 11 L10 15 L12.600 11.800 Z" fill="#222"/></svg>
<span class="t" style="left:52.0px;top:784.2px;font-size:12px;line-height:16px;color:#1f2a33;transform:scaleX(0.8971);transform-origin:0 0;">MKR11</span>
<span class="t" style="left:186.0px;top:784.2px;font-size:12px;line-height:16px;color:#1f2a33;letter-spacing:-0.430px;">98</span>
<svg style="left:17px;top:805.2px;" width="7" height="10" viewBox="0 0 7 10"><path d="M.5 .5 L6.500 5 L.5 9.500 Z" fill="#7b7e81"/></svg>
<svg style="left:31.5px;top:802.2px;" width="16" height="16" viewBox="0 0 16 16"><rect x=".5" y="1.500" width="9.500" height="4.500" fill="#fdf5dc" stroke="#6a6d70" stroke-width=".9"/><path d="M10 3.800 H14.500 L10.500 13" fill="none" stroke="#333" stroke-width="1.100"/><path d="M8.300 11 L10 15 L12.600 11.800 Z" fill="#222"/></svg>
<span class="t" style="left:52.0px;top:802.2px;font-size:12px;line-height:16px;color:#1f2a33;transform:scaleX(0.8772);transform-origin:0 0;">MKR12</span>
<span class="t" style="left:186.0px;top:802.2px;font-size:12px;line-height:16px;color:#1f2a33;letter-spacing:-0.430px;">99</span>
<svg style="left:17px;top:823.2px;" width="7" height="10" viewBox="0 0 7 10"><path d="M.5 .5 L6.500 5 L.5 9.500 Z" fill="#7b7e81"/></svg>
<svg style="left:31.5px;top:820.2px;" width="16" height="16" viewBox="0 0 16 16"><rect x=".5" y="1.500" width="9.500" height="4.500" fill="#fdf5dc" stroke="#6a6d70" stroke-width=".9"/><path d="M10 3.800 H14.500 L10.500 13" fill="none" stroke="#333" stroke-width="1.100"/><path d="M8.300 11 L10 15 L12.600 11.800 Z" fill="#222"/></svg>
<span class="t" style="left:52.0px;top:820.2px;font-size:12px;line-height:16px;color:#1f2a33;transform:scaleX(0.8772);transform-origin:0 0;">MKR13</span>
<span class="t" style="left:183.1px;top:820.2px;font-size:12px;line-height:16px;color:#1f2a33;letter-spacing:-0.577px;">100</span>
<svg style="left:17px;top:841.2px;" width="7" height="10" viewBox="0 0 7 10"><path d="M.5 .5 L6.500 5 L.5 9.500 Z" fill="#7b7e81"/></svg>
<svg style="left:31.5px;top:838.2px;" width="16" height="16" viewBox="0 0 16 16"><rect x=".5" y="1.500" width="9.500" height="4.500" fill="#fdf5dc" stroke="#6a6d70" stroke-width=".9"/><path d="M10 3.800 H14.500 L10.500 13" fill="none" stroke="#333" stroke-width="1.100"/><path d="M8.300 11 L10 15 L12.600 11.800 Z" fill="#222"/></svg>
<span class="t" style="left:52.0px;top:838.2px;font-size:12px;line-height:16px;color:#1f2a33;transform:scaleX(0.8772);transform-origin:0 0;">MKR14</span>
<span class="t" style="left:183.1px;top:838.2px;font-size:12px;line-height:16px;color:#1f2a33;letter-spacing:-0.577px;">101</span>
<div style="left:8px;top:273px;width:211px;height:6px;overflow:hidden;">
<svg style="left:37px;top:-7.800000000000011px;" width="7" height="10" viewBox="0 0 7 10"><path d="M.5 .5 L6.500 5 L.5 9.500 Z" fill="#7b7e81"/></svg>
<svg style="left:51.500px;top:-10.800px" width="16" height="16" viewBox="0 0 16 16"><path d="M1.500 6.500 L6.500 1.500 H15 V9.500 L10 14.500 H1.500 Z" fill="#a8def2" stroke="#6a7a84" stroke-width=".8"/><rect x="1.500" y="6.500" width="8.500" height="8" fill="#fafbfc" stroke="#6a7a84" stroke-width=".8"/></svg>
<span class="t" style="left:63.7px;top:-10.8px;font-size:12px;line-height:16px;color:#1f2a33;letter-spacing:-0.394px;">Extrude 3 [10]</span>
<span class="t" style="left:178.0px;top:-10.8px;font-size:12px;line-height:16px;color:#1f2a33;letter-spacing:-0.480px;">31</span>
</div>
<div style="left:1505px;top:190px;width:349.5px;height:515.5px;background:#ffffff;border:1px solid #9ea3a6;border-radius:7px;box-shadow:0 22px 44px -6px rgba(0,0,0,.38), 0 2px 16px rgba(0,0,0,.15);overflow:hidden;"></div>
<div style="left:1506px;top:191px;width:347.5px;height:29px;background:#dcdfe0;border-radius:6px 6px 0 0;"></div>
<div style="left:1506px;top:219.5px;width:347.5px;height:1px;background:#eceeef;"></div>
<span class="t" style="left:1631.8px;top:197.6px;font-size:12px;line-height:16px;color:#1f2a33;letter-spacing:-0.191px;">Measure: Distance</span>
<svg style="left:1834.5px;top:201px;" width="9" height="9" viewBox="0 0 9 9"><path d="M1.200 1.200 L7.800 7.800 M7.800 1.200 L1.200 7.800" stroke="#4a4f54" stroke-width="1.900"/></svg>
<div style="left:1506px;top:220px;width:347.5px;height:28.5px;background:#eff0f1;"></div>
<div style="left:1506px;top:248.5px;width:347.5px;height:25px;background:#eff0f1;border-top:1px solid #d3d6d8;"></div>
<div style="left:1635.5px;top:249px;width:128.5px;height:24.5px;background:#f1f2f3;border:1px solid #c9cdd0;"></div>
<div style="left:1506px;top:249px;width:129.5px;height:25px;background:#ffffff;border-right:1px solid #c9cdd0;"></div>
<div style="left:1635.5px;top:273px;width:217px;height:1px;background:#c9cdd0;"></div>
<span class="t" style="left:1570.9px;top:254.8px;font-size:12px;line-height:16px;color:#1f2a33;letter-spacing:-0.223px;">Analysis</span>
<span class="t" style="left:1654.7px;top:254.8px;font-size:12px;line-height:16px;color:#4a5258;letter-spacing:-0.237px;">Feature</span>
<div style="left:1506px;top:249px;width:1px;height:426px;background:#dcdfe0;"></div>
<div style="left:1852.5px;top:274px;width:1px;height:401px;background:#dcdfe0;"></div>
<div style="left:1559.5px;top:214px;width:38px;height:40px;background:#ece74e;"></div>
<div style="left:1559.5px;top:214px;width:38px;height:5.5px;background:#d9d648;"></div>
<div style="left:1564.5px;top:220.5px;width:27.5px;height:27.5px;background:#ddd949;border:1px solid #bcb846;"></div>
<div style="left:1705.5px;top:220px;width:27.5px;height:28px;background:#d3edfa;border:1.500px solid #8fd3f5;"></div>
<svg style="left:1512px;top:222px;" width="23" height="25" viewBox="0 0 23 25"><path d="M1.200 16 L15.500 3 L21.500 9.800 L7.200 22.800 Z" fill="#fdfdfd" stroke="#b9bdc0" stroke-width="1"/><path d="M6.800 19.300 L8.300 21 M8.600 17.600 L10.600 19.800 M10.500 15.900 L12 17.600 M12.300 14.300 L14.300 16.500 M14.200 12.600 L15.700 14.300 M16 10.900 L18 13.100 M17.900 9.200 L19.400 10.900" stroke="#2b7ea8" stroke-width="1"/></svg>
<svg style="left:1540px;top:224px;" width="22" height="21" viewBox="0 0 22 21"><path d="M1.700 2 V12 M20.300 2 V12" stroke="#333" stroke-width="1"/><path d="M2.500 4.500 C6 1 9 3.500 11 6.500 C13 9.500 16 10.500 19.500 7.500" stroke="#333" stroke-width="1.100" fill="none"/><path d="M2 5.200 L5.300 2.300 L5 5.700 Z M20 7.200 L16.800 9.800 L17 6.400 Z" fill="#333"/><path d="M1.500 14.500 C4.500 11.500 7.500 13 10 15.500 C13 18.500 17 18.500 21 15" stroke="#39a0d8" stroke-width="2" fill="none"/></svg>
<svg style="left:1567px;top:223px;" width="23" height="22" viewBox="0 0 23 22"><path d="M2.300 1.300 V13 M13.500 1.300 V8.700 M2.300 4.700 H13.500" stroke="#333" stroke-width="1" fill="none"/><path d="M2.300 4.700 L5.300 3 V6.400 Z M13.500 4.700 L10.500 3 V6.400 Z" fill="#333"/><circle cx="3.900" cy="17" r="2" fill="#3fae3f" stroke="#2a8a2a" stroke-width=".6"/><circle cx="15" cy="14" r="2" fill="#3fae3f" stroke="#2a8a2a" stroke-width=".6"/><circle cx="19.800" cy="18.600" r="2" fill="#3fae3f" stroke="#2a8a2a" stroke-width=".6"/><circle cx="3.900" cy="17" r=".7" fill="#b8e8b0"/><circle cx="15" cy="14" r=".7" fill="#b8e8b0"/><circle cx="19.800" cy="18.600" r=".7" fill="#b8e8b0"/></svg>
<svg style="left:1597px;top:224px;" width="21" height="21" viewBox="0 0 21 21"><path d="M.6 19.400 H20 M.6 19.400 L14.500 4" stroke="#555" stroke-width="1.200" fill="none"/><path d="M14.500 7.500 C16.500 10.500 17.500 13 17.500 16.500" stroke="#222" stroke-width="1" fill="none"/><path d="M12.700 8 L15 5.500 L15.800 9 Z M15.800 15 L17.600 18.200 L19.200 15 Z" fill="#222"/></svg>
<svg style="left:1625.5px;top:224.5px;" width="19" height="19" viewBox="0 0 19 19"><circle cx="9.400" cy="9.300" r="8.600" fill="#f6f6f6" stroke="#9a9ea2" stroke-width="1"/><path d="M5 13.800 L14 4.800" stroke="#222" stroke-width="1.100"/><path d="M3.800 15 L5 11.300 L7.500 13.800 Z M15.200 3.600 L14 7.300 L11.500 4.800 Z" fill="#222"/></svg>
<svg style="left:1653.5px;top:224.5px;" width="19" height="19" viewBox="0 0 19 19"><rect x=".9" y=".9" width="17.500" height="17.300" fill="#f3f3f3" stroke="#9a9ea2" stroke-width="1"/><path d="M4 4 L15.300 15.100 M15.300 4 L4 15.100" stroke="#222" stroke-width="1.100"/><path d="M2.500 2.500 L6.300 3.400 L3.400 6.300 Z M16.800 2.500 L15.900 6.300 L13 3.400 Z M2.500 16.600 L3.400 12.800 L6.300 15.700 Z M16.800 16.600 L13 15.700 L15.900 12.800 Z" fill="#222"/></svg>
<svg style="left:1681.5px;top:224px;" width="20" height="21" viewBox="0 0 20 21"><defs><linearGradient id="vg" x1="0" y1="0" x2="0" y2="1"><stop offset="0" stop-color="#e8f7fd"/><stop offset="1" stop-color="#8fd2ef"/></linearGradient></defs><path d="M1 5.500 L5 1 H18.500 V15 L14.500 19.500 H1 Z" fill="#f4fbfe" stroke="#56b2de" stroke-width="1"/><path d="M1 10.500 H14.500 L18.500 7.500 V15 L14.500 19.500 H1 Z" fill="url(#vg)"/><path d="M1 5.500 H14.500 V19.500 M14.500 5.500 L18.500 1 M5 1 V14.500 L1 19.500 M5 14.500 H18.500" fill="none" stroke="#56b2de" stroke-width="1"/></svg>
<svg style="left:1708px;top:222px;" width="23" height="24" viewBox="0 0 23 24"><text x="2" y="13.500" font-size="8.500" font-weight="700" font-family="Liberation Sans,sans-serif" fill="#666">z</text><text x="6.500" y="8" font-size="8.500" font-weight="700" font-family="Liberation Sans,sans-serif" fill="#777">y</text><text x="11.500" y="10.500" font-size="8.500" font-weight="700" font-family="Liberation Sans,sans-serif" fill="#777">x</text><text x="10.500" y="20" font-size="8.500" font-weight="700" font-family="Liberation Sans,sans-serif" fill="#444">y</text><text x="16" y="16.500" font-size="8.500" font-weight="700" font-family="Liberation Sans,sans-serif" fill="#444">x</text><text x="16.500" y="22.500" font-size="8.500" font-weight="700" font-family="Liberation Sans,sans-serif" fill="#444">z</text><path d="M4 15 V18 H9" stroke="#222" stroke-width="1.200" fill="none"/><path d="M6.800 15.800 L9.800 18 L6.800 20.200 Z" fill="#222"/></svg>
<svg style="left:1765.5px;top:226px;" width="17" height="16" viewBox="0 0 17 16"><path d="M1 11 L9 2.500 L15.500 6 L8.500 13.500 H3.500 Z" fill="#fdfdfd" stroke="#7b8085" stroke-width="1"/><path d="M3.500 13.500 H14" stroke="#7b8085" stroke-width="1"/></svg>
<svg style="left:1791px;top:224px;" width="20" height="20" viewBox="0 0 20 20"><path d="M1 1 H19 V19 H1 Z" fill="#6f7479"/><rect x="4" y="1.500" width="12" height="8" fill="#fbfbfb"/><rect x="5" y="12" width="10" height="7" fill="#d8dadc"/><rect x="6.500" y="13.500" width="3" height="5" fill="#6f7479"/></svg>
<svg style="left:1811.5px;top:232.5px;" width="6.5" height="4" viewBox="0 0 6.5 4"><path d="M0 0 H6.5 L3.25 4 Z" fill="#444"/></svg>
<div style="left:1833px;top:228px;width:13px;height:11px;background:#54585d;border-radius:3px;"></div>
<div style="left:1836px;top:232.8px;width:7px;height:1.5px;background:#fff;"></div>
<div style="left:1507px;top:248.5px;width:129px;height:1px;background:#cdd0d3;"></div>
<div style="left:1512.3px;top:280.8px;width:12.5px;height:10px;background:#6a6d72;border-radius:3px;"></div>
<div style="left:1515.3px;top:285.1px;width:6.5px;height:1.4px;background:#fff;"></div>
<span class="t" style="left:1532.2px;top:277.6px;font-size:12px;line-height:16px;color:#2a3238;font-weight:700;letter-spacing:0.151px;">Setup</span>
<div style="left:1570px;top:284.5px;width:222px;height:1px;background:#dcdfe1;"></div>
<div style="left:1795px;top:285px;width:57px;height:1px;background:#dcdfe1;"></div>
<div style="left:1512px;top:298.5px;width:336px;height:100.5px;background:#e9fadb;border:1px solid #a9aeb1;"></div>
<div style="left:1513px;top:299.5px;width:334px;height:21.5px;background:#fdfdfd;border:1px solid #d5d8da;border-bottom:1px solid #c3c7ca;"></div>
<div style="left:1731px;top:299.5px;width:1px;height:21.5px;background:#c3c7ca;"></div>
<span class="t" style="left:1518.8px;top:303.6px;font-size:12px;line-height:16px;color:#1f2a33;letter-spacing:-0.375px;">Reference</span>
<span class="t" style="left:1737.2px;top:303.6px;font-size:12px;line-height:16px;color:#1f2a33;letter-spacing:0.020px;">Options</span>
<div style="left:1514px;top:339.5px;width:217.5px;height:18.5px;background:#b4e4fb;"></div>
<div style="left:1731.5px;top:321px;width:1px;height:37px;background:#dfeecf;"></div>
<div style="left:1734.2px;top:321.5px;width:111.3px;height:41px;background:#eaf04e;"></div>
<div style="left:1734.2px;top:339.3px;width:111.3px;height:1px;background:#dfe55a;"></div>
<span class="t" style="left:1527.6px;top:322.7px;font-size:12px;line-height:16px;color:#1f2a33;transform:scaleX(0.8863);transform-origin:0 0;">Surf:F71(SOLIDIFY_1_4)</span>
<span class="t" style="left:1527.6px;top:341.7px;font-size:12px;line-height:16px;color:#1f2a33;transform:scaleX(0.8863);transform-origin:0 0;">Surf:F70(SOLIDIFY_1_3)</span>
<div style="left:1517px;top:345.5px;width:8.5px;height:8.5px;background:#0f80c4;border-radius:5px;"></div>
<div style="left:1735.3px;top:324.8px;width:11.5px;height:11.5px;background:#f6f25c;border:1px solid #5a5c2a;"></div>
<div style="left:1735.3px;top:343.8px;width:11.5px;height:11.5px;background:#f6f25c;border:1px solid #5a5c2a;"></div>
<span class="t" style="left:1750.9px;top:322.7px;font-size:12px;line-height:16px;color:#1f2a33;letter-spacing:-0.418px;">Use as Axis</span>
<span class="t" style="left:1750.9px;top:341.7px;font-size:12px;line-height:16px;color:#1f2a33;letter-spacing:-0.418px;">Use as Axis</span>
<span class="t" style="left:1514.4px;top:406.5px;font-size:12px;line-height:16px;color:#1f2a33;letter-spacing:0.072px;">Projection:</span>
<div style="left:1576px;top:402px;width:158.5px;height:25.5px;background:#f2eefb;border:1px solid #b9bfc3;"></div>
<span class="t" style="left:1593.8px;top:406.5px;font-size:12px;line-height:16px;color:#1f2a33;letter-spacing:0.006px;">Click here to add item</span>
<div style="left:1737px;top:401px;width:28px;height:27.5px;background:#f4f5f6;border:1px solid #9ea3a6;"></div>
<svg style="left:1742.5px;top:407px;" width="17" height="15" viewBox="0 0 17 15"><rect x="1" y="1" width="15" height="10" fill="#e8f6fd" stroke="#555" stroke-width="1"/><rect x="3" y="3" width="11" height="6" fill="#4fb3e6"/><path d="M6 11 V13 M11 11 V13 M4.500 13.500 H12.500" stroke="#555" stroke-width="1"/></svg>
<div style="left:1767.5px;top:403px;width:80.5px;height:23px;background:#fbfbfb;border:1px solid #c3c7ca;"></div>
<div style="left:1831.5px;top:404.5px;width:1px;height:20.5px;background:#d5d8da;"></div>
<span class="t" style="left:1774.8px;top:406.5px;font-size:12px;line-height:16px;color:#a9adb0;letter-spacing:-0.262px;">Cartesian</span>
<svg style="left:1835.5px;top:413px;" width="7.5" height="4" viewBox="0 0 7.5 4"><path d="M0 0 H7.5 L3.75 4 Z" fill="#8e9296"/></svg>
<div style="left:1512.3px;top:432.8px;width:11.5px;height:11.5px;background:#fff;border:1px solid #5a5f63;"></div>
<span class="t" style="left:1531.1px;top:431.1px;font-size:12px;line-height:16px;color:#1f2a33;letter-spacing:0.010px;">Measure maximum distance</span>
<div style="left:1512.3px;top:464.6px;width:12.5px;height:10px;background:#6a6d72;border-radius:3px;"></div>
<div style="left:1515.3px;top:468.90000000000003px;width:6.5px;height:1.4px;background:#fff;"></div>
<span class="t" style="left:1532.9px;top:462.2px;font-size:12px;line-height:16px;color:#2a3238;font-weight:700;letter-spacing:-0.408px;">Results</span>
<div style="left:1576px;top:469px;width:208px;height:1px;background:#dcdfe1;"></div>
<div style="left:1787px;top:469px;width:11px;height:1px;background:#dcdfe1;"></div>
<div style="left:1805.5px;top:460px;width:13.5px;height:19.5px;background:#16607e;border-radius:2.500px;"></div>
<span class="t" style="left:1809.6px;top:460.6px;font-size:15px;line-height:18px;color:#fff;font-weight:700;font-family:&quot;Liberation Serif&quot;,serif;">i</span>
<svg style="left:1832.5px;top:462.5px;" width="14" height="16" viewBox="0 0 14 16"><path d="M.5 .5 H9 L13.500 5 V15.500 H.5 Z" fill="#fbfbfb" stroke="#8e9296" stroke-width=".9"/><path d="M9 .5 V5 H13.500" fill="#e4e7e9" stroke="#8e9296" stroke-width=".9"/><circle cx="3.800" cy="8.500" r="1" fill="none" stroke="#555" stroke-width=".8"/><circle cx="3.800" cy="12" r="1" fill="none" stroke="#555" stroke-width=".8"/><path d="M6 8.500 H11.500 M6 12 H11.500" stroke="#555" stroke-width=".9"/></svg>
<div style="left:1512px;top:484px;width:336px;height:185px;background:#ffffff;border:1px solid #a9aeb1;"></div>
<div style="left:1513px;top:485px;width:333px;height:22px;background:#fdfdfd;border:1px solid #dfe2e4;border-bottom:1px solid #c9cdd0;"></div>
<div style="left:1513px;top:507px;width:333px;height:19.5px;border-bottom:1px solid #e1e4e6;"></div>
<div style="left:1615.5px;top:485px;width:1px;height:41px;background:#dfe2e4;"></div>
<div style="left:1693px;top:485px;width:1px;height:41px;background:#dfe2e4;"></div>
<div style="left:1747px;top:485px;width:1px;height:41px;background:#dfe2e4;"></div>
<div style="left:1845.5px;top:485px;width:1px;height:41px;background:#dfe2e4;"></div>
<span class="t" style="left:1519.0px;top:490.2px;font-size:12px;line-height:16px;color:#1f2a33;letter-spacing:-0.408px;">Reference</span>
<span class="t" style="left:1620.8px;top:490.2px;font-size:12px;line-height:16px;color:#1f2a33;letter-spacing:-0.198px;">Measure</span>
<span class="t" style="left:1698.4px;top:490.2px;font-size:12px;line-height:16px;color:#1f2a33;letter-spacing:-0.182px;">Value</span>
<span class="t" style="left:1752.3px;top:490.2px;font-size:12px;line-height:16px;color:#1f2a33;letter-spacing:0.051px;">Units</span>
<span class="t" style="left:1516.8px;top:508.8px;font-size:12px;line-height:16px;color:#1f2a33;letter-spacing:-0.246px;">All References</span>
<span class="t" style="left:1618.4px;top:508.8px;font-size:12px;line-height:16px;color:#1f2a33;letter-spacing:-0.111px;">Distance</span>
<span class="t" style="left:1696.4px;top:508.8px;font-size:12px;line-height:16px;color:#1f2a33;letter-spacing:-0.527px;">4.42770</span>
<span class="t" style="left:1750.7px;top:508.6px;font-size:12.8px;line-height:16px;color:#1f2a33;letter-spacing:0.436px;">mm</span>
<div style="left:1506px;top:675px;width:347.5px;height:29.5px;background:#eff0f1;border-top:1px solid #c9cdd0;border-radius:0 0 6px 6px;"></div>
<div style="left:1791.5px;top:679px;width:59.5px;height:23.5px;background:#b3e5fc;border:1px solid #7fcdf0;"></div>
<span class="t" style="left:1805.8px;top:682.7px;font-size:12px;line-height:16px;color:#1f2a33;letter-spacing:-0.298px;">Close</span>
</div></body></html>
